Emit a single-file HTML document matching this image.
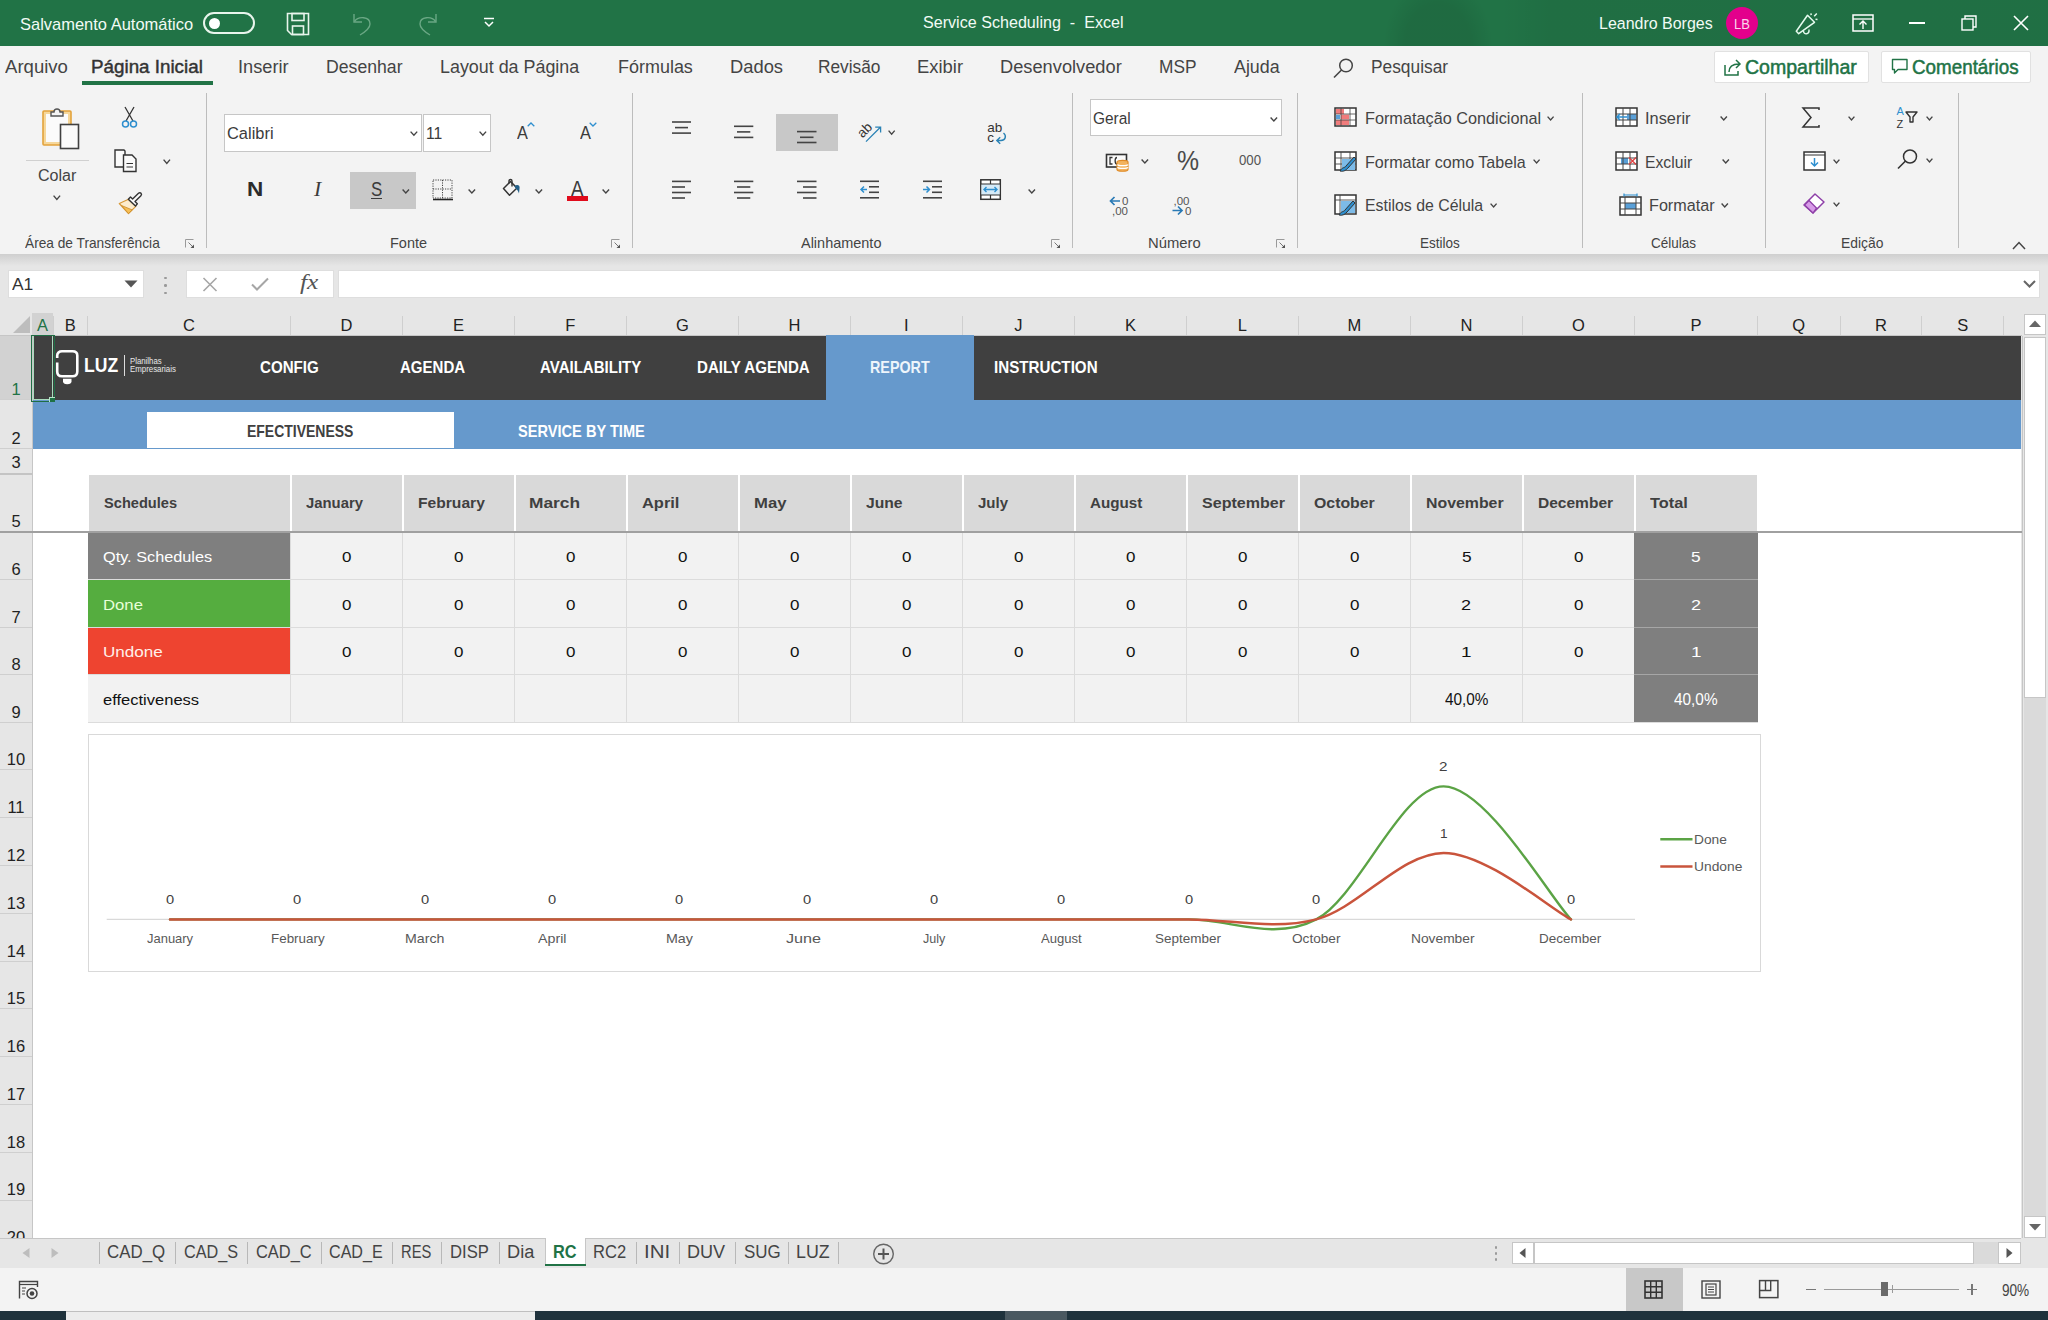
<!DOCTYPE html>
<html><head><meta charset="utf-8"><title>Service Scheduling - Excel</title>
<style>
*{margin:0;padding:0;box-sizing:border-box}
html,body{width:2048px;height:1320px;overflow:hidden;background:#fff;font-family:"Liberation Sans",sans-serif;color:#444;position:relative}
.a{position:absolute}
.t{position:absolute;white-space:pre;transform-origin:0 0}
svg{overflow:visible}
</style></head><body>
<div class="a" style="left:0px;top:0px;width:2048px;height:46px;z-index:0;background:#217346"></div>
<div class="a" style="left:0px;top:46px;width:2048px;height:208px;z-index:0;background:#f3f3f3"></div>
<div class="a" style="left:0px;top:254px;width:2048px;height:12px;z-index:0;background:linear-gradient(#cfcfcf,#e6e6e6)"></div>
<div class="a" style="left:0px;top:266px;width:2048px;height:47px;z-index:0;background:#e6e6e6"></div>
<div class="a" style="left:0px;top:313px;width:2048px;height:22px;z-index:0;background:#e6e6e6"></div>
<div class="a" style="left:0px;top:335px;width:2048px;height:903px;z-index:0;background:#ffffff"></div>
<div class="a" style="left:0px;top:1238px;width:2048px;height:30px;z-index:0;background:#e6e6e6;border-top:1px solid #c6c6c6"></div>
<div class="a" style="left:0px;top:1268px;width:2048px;height:43px;z-index:0;background:#f3f3f3"></div>
<div class="a" style="left:0px;top:1311px;width:2048px;height:9px;z-index:0;background:#1f323c"></div>
<div class="a" style="left:1380px;top:0px;width:668px;height:46px;z-index:1;background:radial-gradient(ellipse 55px 70px at 58px 46px, rgba(0,0,0,0.075), rgba(0,0,0,0.075) 60%, rgba(0,0,0,0) 100%), linear-gradient(90deg, rgba(0,0,0,0) 0, rgba(0,0,0,0) 120px, rgba(0,0,0,0.045) 170px, rgba(0,0,0,0.03) 100%)"></div>
<div class="a" style="left:203px;top:12px;width:52px;height:22px;z-index:3;border:2px solid #e8f5ec;border-radius:11px"></div>
<div class="a" style="left:208.5px;top:17.5px;width:11.0px;height:11.0px;z-index:4;background:#fff;border-radius:50%"></div>
<svg class="a" style="left:286px;top:12px;z-index:6" width="24" height="24" viewBox="0 0 24 24"><path d="M1.5 1.5 H22.5 V22.5 H5.5 L1.5 18.5 Z" fill="none" stroke="#e8f5ec" stroke-width="1.6"/><rect x="6" y="1.5" width="12" height="7" fill="none" stroke="#e8f5ec" stroke-width="1.6"/><rect x="6.5" y="14" width="11" height="8.5" fill="none" stroke="#e8f5ec" stroke-width="1.6"/></svg>
<svg class="a" style="left:352px;top:12px;z-index:6" width="22" height="24" viewBox="0 0 22 24"><path d="M2 2 V10 H10" fill="none" stroke="#6aa784" stroke-width="1.4"/><path d="M2.5 9.5 C6 4 18 4 18 12 C18 16 13 20 8 23" fill="none" stroke="#6aa784" stroke-width="1.4"/></svg>
<svg class="a" style="left:416px;top:12px;z-index:6" width="22" height="24" viewBox="0 0 22 24"><path d="M20 2 V10 H12" fill="none" stroke="#6aa784" stroke-width="1.4"/><path d="M19.5 9.5 C16 4 4 4 4 12 C4 16 9 20 14 23" fill="none" stroke="#6aa784" stroke-width="1.4"/></svg>
<svg class="a" style="left:483px;top:17px;z-index:6" width="12" height="11" viewBox="0 0 12 11"><path d="M1 1.5 H11" stroke="#fff" stroke-width="1.5"/><path d="M2 5 L6 9 L10 5" fill="none" stroke="#fff" stroke-width="1.5"/></svg>
<div class="a" style="left:1726px;top:7px;width:32px;height:32px;z-index:3;background:#e3008c;border-radius:50%"></div>
<svg class="a" style="left:1794px;top:10px;z-index:6" width="26" height="26" viewBox="0 0 26 26"><path d="M13.5 5.3 L20.5 12.3 L4.7 23.7 L2.3 21.3 Z" fill="none" stroke="#e6fbee" stroke-width="1.5" stroke-linejoin="round"/><path d="M9.5 21 C9.5 25 15.5 25 15 19.5" fill="none" stroke="#e6fbee" stroke-width="1.4"/><path d="M16.9 3.4 L17.2 5.2 M20.2 6.2 L22.8 3.5 M21.5 9.3 L23.5 9.5" stroke="#e6fbee" stroke-width="1.5"/></svg>
<svg class="a" style="left:1852px;top:14px;z-index:6" width="22" height="18" viewBox="0 0 22 18"><rect x="1" y="1" width="20" height="16" fill="none" stroke="#fff" stroke-width="1.5"/><path d="M1 5 H21" stroke="#fff" stroke-width="1.3"/><path d="M11 15 V7 M7.5 10.5 L11 7 L14.5 10.5" fill="none" stroke="#fff" stroke-width="1.4"/></svg>
<div class="a" style="left:1909px;top:22px;width:16px;height:2px;z-index:3;background:#fff"></div>
<svg class="a" style="left:1961px;top:15px;z-index:6" width="16" height="16" viewBox="0 0 16 16"><rect x="1" y="4" width="11" height="11" fill="none" stroke="#fff" stroke-width="1.4"/><path d="M4 4 V1 H15 V12 H12" fill="none" stroke="#fff" stroke-width="1.4"/></svg>
<svg class="a" style="left:2013px;top:15px;z-index:6" width="16" height="16" viewBox="0 0 16 16"><path d="M1 1 L15 15 M15 1 L1 15" stroke="#fff" stroke-width="1.6"/></svg>
<div class="a" style="left:82px;top:81px;width:131px;height:4px;z-index:3;background:#217346"></div>
<svg class="a" style="left:1333px;top:58px;z-index:6" width="21" height="21" viewBox="0 0 21 21"><circle cx="13" cy="7.5" r="6.3" fill="none" stroke="#444" stroke-width="1.5"/><path d="M8.5 12 L1 19.5" stroke="#444" stroke-width="1.6"/></svg>
<div class="a" style="left:1714px;top:51px;width:155px;height:32px;z-index:2;background:#fff;border:1px solid #e1e1e1;border-radius:2px"></div>
<div class="a" style="left:1881px;top:51px;width:150px;height:32px;z-index:2;background:#fff;border:1px solid #e1e1e1;border-radius:2px"></div>
<svg class="a" style="left:1723px;top:57px;z-index:6" width="20" height="20" viewBox="0 0 20 20"><path d="M2 8 V18 H15 V14" fill="none" stroke="#217346" stroke-width="1.5"/><path d="M6 15 C6 9 10 7 16 7 M13 3 L17 7 L13 11" fill="none" stroke="#217346" stroke-width="1.5"/></svg>
<svg class="a" style="left:1891px;top:58px;z-index:6" width="18" height="18" viewBox="0 0 18 18"><path d="M1.5 1.5 H16 V11.5 H7 L3.5 15 V11.5 H1.5 Z" fill="none" stroke="#217346" stroke-width="1.4" stroke-linejoin="round"/></svg>
<div class="a" style="left:206.1px;top:93px;width:1.1999999999999886px;height:155px;z-index:2;background:#bcbcbc"></div>
<div class="a" style="left:632.1999999999999px;top:93px;width:1.2000000000000455px;height:155px;z-index:2;background:#bcbcbc"></div>
<div class="a" style="left:1071.8000000000002px;top:93px;width:1.199999999999818px;height:155px;z-index:2;background:#bcbcbc"></div>
<div class="a" style="left:1296.8000000000002px;top:93px;width:1.199999999999818px;height:155px;z-index:2;background:#bcbcbc"></div>
<div class="a" style="left:1581.8000000000002px;top:93px;width:1.199999999999818px;height:155px;z-index:2;background:#bcbcbc"></div>
<div class="a" style="left:1765.1000000000001px;top:93px;width:1.199999999999818px;height:155px;z-index:2;background:#bcbcbc"></div>
<div class="a" style="left:1957.6000000000001px;top:93px;width:1.199999999999818px;height:155px;z-index:2;background:#bcbcbc"></div>
<svg class="a" style="left:42px;top:107px;z-index:6" width="38" height="43" viewBox="0 0 38 43">
<rect x="1" y="4" width="28" height="34" rx="1" fill="#f6d79a" stroke="#e3a33b" stroke-width="1.6"/>
<rect x="4" y="7" width="22" height="28" fill="#fbfbfb"/>
<path d="M9 9 V5 H12 C12 1 18 1 18 5 H21 V9 Z" fill="#f4f4f4" stroke="#555" stroke-width="1.4"/>
<rect x="18.5" y="17.5" width="18" height="24" fill="#fafafa" stroke="#404040" stroke-width="1.6"/></svg>
<div class="a" style="left:26px;top:160px;width:63px;height:1px;z-index:2;background:#d0d0d0"></div>
<svg class="a" style="left:52.8px;top:194.5px;z-index:6" width="7.7" height="5" viewBox="0 0 7.7 5"><path d="M0.6 0.6 L3.85 4.4 L7.1000000000000005 0.6" fill="none" stroke="#444" stroke-width="1.4"/></svg>
<svg class="a" style="left:121px;top:106px;z-index:6" width="17" height="23" viewBox="0 0 17 23"><path d="M4 1 L12 15 M13 1 L5 15" stroke="#333" stroke-width="1.3"/><circle cx="4.5" cy="18" r="3" fill="none" stroke="#2e8fcf" stroke-width="1.5"/><circle cx="12.5" cy="18" r="3" fill="none" stroke="#2e8fcf" stroke-width="1.5"/></svg>
<svg class="a" style="left:114px;top:149px;z-index:6" width="23" height="24" viewBox="0 0 23 24"><path d="M1 1 H10 L11 2 V18 H1 Z" fill="#fafafa" stroke="#333" stroke-width="1.4"/><path d="M9.5 6 H18 L22 10 V22.5 H9.5 Z" fill="#fafafa" stroke="#333" stroke-width="1.4"/><path d="M12.5 14.5 H19 M12.5 18 H19" stroke="#333" stroke-width="1.2"/></svg>
<svg class="a" style="left:163px;top:159px;z-index:6" width="7.6" height="5" viewBox="0 0 7.6 5"><path d="M0.6 0.6 L3.8 4.4 L7.0 0.6" fill="none" stroke="#444" stroke-width="1.4"/></svg>
<svg class="a" style="left:118px;top:192px;z-index:6" width="25" height="24" viewBox="0 0 25 24"><path d="M1.3 11.5 L10.5 7.2 L17.8 14.4 L10.5 21.5 Z" fill="#fdeccd" stroke="#d99a3a" stroke-width="1.2" stroke-linejoin="round"/><path d="M3.5 13.5 L14.2 17.9 L10.5 21.5 Z" fill="#f7bf55" stroke="#c98a2a" stroke-width="0.8"/><path d="M10.3 7.3 L12.5 5 L14.6 7 L20.5 1.3 C21.3 0.6 22.4 0.6 23 1.3 C23.6 2 23.6 3 22.9 3.7 L17 9.4 L19.3 11.8 L17.5 14.1 Z" fill="#fafafa" stroke="#333" stroke-width="1.4" stroke-linejoin="round"/></svg>
<svg class="a" style="left:185px;top:239px;z-index:6" width="10" height="9" viewBox="0 0 10 9"><path d="M0.5 8.5 V0.5 H8.5" fill="none" stroke="#9a9a9a" stroke-width="1"/><path d="M3.5 3.5 L8.5 8.5" stroke="#666" stroke-width="0.9"/><path d="M5.5 9 H9 V5.5 Z" fill="#555"/></svg>
<div class="a" style="left:224px;top:113.5px;width:197.5px;height:38.0px;z-index:2;background:#fff;border:1px solid #c6c6c6"></div>
<div class="a" style="left:423px;top:113.5px;width:68px;height:38.0px;z-index:2;background:#fff;border:1px solid #c6c6c6"></div>
<svg class="a" style="left:409.6px;top:131px;z-index:6" width="7.8" height="4.8" viewBox="0 0 7.8 4.8"><path d="M0.6 0.6 L3.9 4.2 L7.2 0.6" fill="none" stroke="#444" stroke-width="1.4"/></svg>
<svg class="a" style="left:478.6px;top:131px;z-index:6" width="7.7" height="4.8" viewBox="0 0 7.7 4.8"><path d="M0.6 0.6 L3.85 4.2 L7.1000000000000005 0.6" fill="none" stroke="#444" stroke-width="1.4"/></svg>
<svg class="a" style="left:527px;top:122px;z-index:6" width="8" height="5" viewBox="0 0 8 5"><path d="M0.7 4.3 L4 1 L7.3 4.3" fill="none" stroke="#2e8fcf" stroke-width="1.3"/></svg>
<svg class="a" style="left:589px;top:122px;z-index:6" width="8" height="5" viewBox="0 0 8 5"><path d="M0.7 0.7 L4 4 L7.3 0.7" fill="none" stroke="#2e8fcf" stroke-width="1.3"/></svg>
<div class="a" style="left:349.7px;top:171.8px;width:66.10000000000002px;height:37.29999999999998px;z-index:1;background:#c8c8c8"></div>
<div class="a" style="left:371px;top:197.5px;width:11px;height:1.5px;z-index:3;background:#3b3b3b"></div>
<svg class="a" style="left:402px;top:188.5px;z-index:6" width="7.6" height="4.6" viewBox="0 0 7.6 4.6"><path d="M0.6 0.6 L3.8 3.9999999999999996 L7.0 0.6" fill="none" stroke="#444" stroke-width="1.4"/></svg>
<svg class="a" style="left:432px;top:179px;z-index:6" width="22" height="22" viewBox="0 0 22 22"><rect x="1" y="1" width="19" height="18" fill="none" stroke="#444" stroke-width="1" stroke-dasharray="1.2 1.2"/><path d="M10.5 1 V19 M1 10 H20" stroke="#444" stroke-width="1" stroke-dasharray="1.2 1.2"/><path d="M1 20.5 H21" stroke="#222" stroke-width="1.6"/></svg>
<svg class="a" style="left:468.3px;top:188.5px;z-index:6" width="7.7" height="4.6" viewBox="0 0 7.7 4.6"><path d="M0.6 0.6 L3.85 3.9999999999999996 L7.1000000000000005 0.6" fill="none" stroke="#444" stroke-width="1.4"/></svg>
<svg class="a" style="left:502px;top:178px;z-index:6" width="20" height="19" viewBox="0 0 20 19"><path d="M1.5 10.5 L8.5 3.5 L15 10 L7.5 17.3 Z" fill="none" stroke="#333" stroke-width="1.5" stroke-linejoin="round"/><path d="M7 5.5 V3 C7 1 10 1 10 3 V8.5" fill="none" stroke="#333" stroke-width="1.4"/><path d="M12.5 8.5 C14.5 5.8 18 6.8 17.6 9.8 L17 15.5 C16.3 13.5 15.5 12 14 10.8 Z" fill="#215f88"/></svg>
<svg class="a" style="left:535.3px;top:188.5px;z-index:6" width="7.7" height="4.6" viewBox="0 0 7.7 4.6"><path d="M0.6 0.6 L3.85 3.9999999999999996 L7.1000000000000005 0.6" fill="none" stroke="#444" stroke-width="1.4"/></svg>
<div class="a" style="left:566.6px;top:195.9px;width:21.399999999999977px;height:5.5px;z-index:3;background:#e00b1c"></div>
<svg class="a" style="left:602px;top:188.5px;z-index:6" width="7.7" height="4.6" viewBox="0 0 7.7 4.6"><path d="M0.6 0.6 L3.85 3.9999999999999996 L7.1000000000000005 0.6" fill="none" stroke="#444" stroke-width="1.4"/></svg>
<svg class="a" style="left:611.3px;top:239px;z-index:6" width="10" height="9" viewBox="0 0 10 9"><path d="M0.5 8.5 V0.5 H8.5" fill="none" stroke="#9a9a9a" stroke-width="1"/><path d="M3.5 3.5 L8.5 8.5" stroke="#666" stroke-width="0.9"/><path d="M5.5 9 H9 V5.5 Z" fill="#555"/></svg>
<svg class="a" style="left:672px;top:120px;z-index:6" width="20" height="16" viewBox="0 0 20 16"><rect x="0" y="1.2" width="19" height="1.6" fill="#444"/><rect x="3" y="6.8" width="13" height="1.6" fill="#444"/><rect x="0" y="12.3" width="19" height="1.6" fill="#444"/></svg>
<svg class="a" style="left:734.4px;top:125px;z-index:6" width="20" height="16" viewBox="0 0 20 16"><rect x="0" y="0.5" width="19.3" height="1.6" fill="#444"/><rect x="3" y="6.1" width="13.3" height="1.6" fill="#444"/><rect x="0" y="11.6" width="19.3" height="1.6" fill="#444"/></svg>
<div class="a" style="left:775.5px;top:113.6px;width:62.5px;height:37.80000000000001px;z-index:1;background:#c8c8c8"></div>
<svg class="a" style="left:797px;top:130px;z-index:6" width="20" height="16" viewBox="0 0 20 16"><rect x="0" y="0.8" width="19.5" height="1.6" fill="#444"/><rect x="3" y="6.5" width="13.5" height="1.6" fill="#444"/><rect x="0" y="11.7" width="19.5" height="1.6" fill="#444"/></svg>
<svg class="a" style="left:672px;top:180px;z-index:6" width="20" height="20" viewBox="0 0 20 20"><rect x="0" y="0.6" width="19" height="1.6" fill="#444"/><rect x="0" y="6.2" width="13" height="1.6" fill="#444"/><rect x="0" y="11.7" width="19" height="1.6" fill="#444"/><rect x="0" y="17.2" width="13" height="1.6" fill="#444"/></svg>
<svg class="a" style="left:734.4px;top:180px;z-index:6" width="20" height="20" viewBox="0 0 20 20"><rect x="0" y="0.6" width="19.3" height="1.6" fill="#444"/><rect x="3" y="6.2" width="13.3" height="1.6" fill="#444"/><rect x="0" y="11.7" width="19.3" height="1.6" fill="#444"/><rect x="3" y="17.2" width="13.3" height="1.6" fill="#444"/></svg>
<svg class="a" style="left:797px;top:180px;z-index:6" width="20" height="20" viewBox="0 0 20 20"><rect x="0" y="0.6" width="19.5" height="1.6" fill="#444"/><rect x="6" y="6.2" width="13.5" height="1.6" fill="#444"/><rect x="0" y="11.7" width="19.5" height="1.6" fill="#444"/><rect x="6" y="17.2" width="13.5" height="1.6" fill="#444"/></svg>
<svg class="a" style="left:856px;top:119px;z-index:6" width="28" height="26" viewBox="0 0 28 26"><text x="0" y="0" font-family="Liberation Sans" font-size="13.5" fill="#333" transform="translate(6.5 19.5) rotate(-45)">ab</text><path d="M10 22.6 L24.6 8 M19.2 8.2 H24.6 V13.6" fill="none" stroke="#2a82b5" stroke-width="1.3"/></svg>
<svg class="a" style="left:888px;top:130px;z-index:6" width="7.3" height="4.7" viewBox="0 0 7.3 4.7"><path d="M0.6 0.6 L3.65 4.1000000000000005 L6.7 0.6" fill="none" stroke="#444" stroke-width="1.4"/></svg>
<svg class="a" style="left:986px;top:119px;z-index:6" width="24" height="26" viewBox="0 0 24 26"><text x="1.2" y="12.6" font-family="Liberation Sans" font-size="13.5" fill="#333">ab</text><text x="1.2" y="22.6" font-family="Liberation Sans" font-size="13.5" fill="#333">c</text><path d="M17.5 14 C20.5 16.5 20 21 15 21.5 H11 M14.2 18.2 L10.8 21.5 L14.2 24.8" fill="none" stroke="#2a82b5" stroke-width="1.4"/></svg>
<svg class="a" style="left:860px;top:180px;z-index:6" width="20" height="20" viewBox="0 0 20 20"><rect x="0" y="0.5" width="19" height="1.6" fill="#444"/><rect x="9" y="6" width="10" height="1.6" fill="#444"/><rect x="9" y="11.5" width="10" height="1.6" fill="#444"/><rect x="0" y="17" width="19" height="1.6" fill="#444"/><path d="M7 9.5 H1 M4 6.5 L1 9.5 L4 12.5" fill="none" stroke="#2e8fcf" stroke-width="1.5"/></svg>
<svg class="a" style="left:922.8px;top:180px;z-index:6" width="20" height="20" viewBox="0 0 20 20"><rect x="0" y="0.5" width="19" height="1.6" fill="#444"/><rect x="9" y="6" width="10" height="1.6" fill="#444"/><rect x="9" y="11.5" width="10" height="1.6" fill="#444"/><rect x="0" y="17" width="19" height="1.6" fill="#444"/><path d="M0 9.5 H6.5 M3.5 6.5 L6.5 9.5 L3.5 12.5" fill="none" stroke="#2e8fcf" stroke-width="1.5"/></svg>
<svg class="a" style="left:980px;top:179px;z-index:6" width="22" height="22" viewBox="0 0 22 22"><rect x="0.8" y="0.8" width="19.5" height="19.5" fill="#fff" stroke="#333" stroke-width="1.5"/><rect x="1.5" y="5" width="18" height="11" fill="#d6ebf8"/><path d="M1 5 H20 M1 16 H20 M10.5 1 V5 M10.5 16 V20" stroke="#333" stroke-width="1.2"/><path d="M4 10.5 H17 M6.5 8 L4 10.5 L6.5 13 M14.5 8 L17 10.5 L14.5 13" fill="none" stroke="#2e8fcf" stroke-width="1.4"/></svg>
<svg class="a" style="left:1028.4px;top:188.5px;z-index:6" width="7.6" height="4.6" viewBox="0 0 7.6 4.6"><path d="M0.6 0.6 L3.8 3.9999999999999996 L7.0 0.6" fill="none" stroke="#444" stroke-width="1.4"/></svg>
<svg class="a" style="left:1051px;top:239px;z-index:6" width="10" height="9" viewBox="0 0 10 9"><path d="M0.5 8.5 V0.5 H8.5" fill="none" stroke="#9a9a9a" stroke-width="1"/><path d="M3.5 3.5 L8.5 8.5" stroke="#666" stroke-width="0.9"/><path d="M5.5 9 H9 V5.5 Z" fill="#555"/></svg>
<div class="a" style="left:1090px;top:98.8px;width:192px;height:36.89999999999999px;z-index:2;background:#fff;border:1px solid #c6c6c6"></div>
<svg class="a" style="left:1269.5px;top:117px;z-index:6" width="7.7" height="4.6" viewBox="0 0 7.7 4.6"><path d="M0.6 0.6 L3.85 3.9999999999999996 L7.1000000000000005 0.6" fill="none" stroke="#444" stroke-width="1.4"/></svg>
<svg class="a" style="left:1105px;top:153px;z-index:6" width="24" height="20" viewBox="0 0 24 20"><rect x="1.5" y="1.5" width="20" height="12.5" fill="#fafafa" stroke="#333" stroke-width="1.6"/><path d="M7.5 4.5 H5 V11 H7.5 M12 4.5 C9.5 4.5 9.5 11 12 11" fill="none" stroke="#333" stroke-width="1.3"/><path d="M12 9 C12 6.8 23 6.8 23 9 V16.5 C23 18.8 12 18.8 12 16.5 Z" fill="#f3b35e" stroke="#e08a25" stroke-width="1.2"/><path d="M12.5 11.5 C13 13 22.5 13 23 11.5 M12.5 14.2 C13 15.7 22.5 15.7 23 14.2" fill="none" stroke="#fff" stroke-width="1.2"/></svg>
<svg class="a" style="left:1141.3px;top:159px;z-index:6" width="7.7" height="4.6" viewBox="0 0 7.7 4.6"><path d="M0.6 0.6 L3.85 3.9999999999999996 L7.1000000000000005 0.6" fill="none" stroke="#444" stroke-width="1.4"/></svg>
<svg class="a" style="left:1109px;top:194px;z-index:6" width="23" height="22" viewBox="0 0 23 22"><path d="M11 7 H1.5 M5.5 3 L1.5 7 L5.5 11" fill="none" stroke="#2a7ab5" stroke-width="1.7"/><text x="13" y="11.2" font-family="Liberation Sans" font-size="11.5" fill="#555">0</text><text x="3" y="20.5" font-family="Liberation Sans" font-size="11.5" fill="#555">,00</text></svg>
<svg class="a" style="left:1172px;top:194px;z-index:6" width="23" height="22" viewBox="0 0 23 22"><text x="1.5" y="11.2" font-family="Liberation Sans" font-size="11.5" fill="#555">,00</text><path d="M0.5 16.5 H10 M6 12.5 L10 16.5 L6 20.5" fill="none" stroke="#2a7ab5" stroke-width="1.7"/><text x="13" y="20.5" font-family="Liberation Sans" font-size="11.5" fill="#555">0</text></svg>
<svg class="a" style="left:1276px;top:239px;z-index:6" width="10" height="9" viewBox="0 0 10 9"><path d="M0.5 8.5 V0.5 H8.5" fill="none" stroke="#9a9a9a" stroke-width="1"/><path d="M3.5 3.5 L8.5 8.5" stroke="#666" stroke-width="0.9"/><path d="M5.5 9 H9 V5.5 Z" fill="#555"/></svg>
<svg class="a" style="left:1334px;top:107px;z-index:6" width="24" height="21" viewBox="0 0 24 21"><rect x="1" y="1" width="21" height="18" fill="#fff" stroke="#333" stroke-width="1.5"/><rect x="2" y="2" width="8" height="5" fill="#f07c7c"/><rect x="7" y="7.5" width="8" height="5" fill="#f07c7c"/><rect x="2" y="13" width="13" height="5" fill="#f07c7c"/><rect x="2" y="8" width="4" height="4" fill="#5aa0d8"/><path d="M1 7 H22 M1 13 H22 M7 1 V19 M16 1 V19" stroke="#444" stroke-width="0.8"/></svg>
<svg class="a" style="left:1547px;top:116px;z-index:6" width="7.2" height="4.5" viewBox="0 0 7.2 4.5"><path d="M0.6 0.6 L3.6 3.9 L6.6000000000000005 0.6" fill="none" stroke="#444" stroke-width="1.4"/></svg>
<svg class="a" style="left:1334px;top:151px;z-index:6" width="24" height="21" viewBox="0 0 24 21"><rect x="1" y="1" width="21" height="18" fill="#fff" stroke="#333" stroke-width="1.5"/><path d="M1 7 H22 M1 13 H22 M7 1 V19 M16 1 V19" stroke="#444" stroke-width="0.9"/><path d="M8 8 H21 V19 H8 Z" fill="#7dbbe8"/><path d="M6 20 C8 16 11 17 12 15 L20 6 L22 8 L14 17 C12 19 10 21 6 20 Z" fill="#2e8fcf" stroke="#333" stroke-width="1"/></svg>
<svg class="a" style="left:1532.6px;top:159px;z-index:6" width="7.2" height="4.5" viewBox="0 0 7.2 4.5"><path d="M0.6 0.6 L3.6 3.9 L6.6000000000000005 0.6" fill="none" stroke="#444" stroke-width="1.4"/></svg>
<svg class="a" style="left:1334px;top:194px;z-index:6" width="24" height="22" viewBox="0 0 24 22"><rect x="1" y="1" width="21" height="19" fill="#fff" stroke="#333" stroke-width="1.5"/><path d="M1 6 H22 M6 1 V20" stroke="#444" stroke-width="0.9"/><path d="M7 7 H21 V19 H7 Z" fill="#7dbbe8"/><path d="M5 21 C7 17 10 18 11 16 L19 7 L21 9 L13 18 C11 20 9 22 5 21 Z" fill="#2e8fcf" stroke="#333" stroke-width="1"/></svg>
<svg class="a" style="left:1489.8px;top:203px;z-index:6" width="7.2" height="4.5" viewBox="0 0 7.2 4.5"><path d="M0.6 0.6 L3.6 3.9 L6.6000000000000005 0.6" fill="none" stroke="#444" stroke-width="1.4"/></svg>
<svg class="a" style="left:1615px;top:107px;z-index:6" width="24" height="21" viewBox="0 0 24 21"><rect x="1" y="1" width="21" height="18" fill="#fff" stroke="#333" stroke-width="1.5"/><rect x="12" y="7" width="9" height="6" fill="#5aa0d8"/><path d="M1 7 H22 M1 13 H22 M8 1 V19 M15 1 V19" stroke="#444" stroke-width="1"/><path d="M12 10 H2 M5 7 L2 10 L5 13" fill="none" stroke="#2e8fcf" stroke-width="1.6"/></svg>
<svg class="a" style="left:1720px;top:116px;z-index:6" width="7.5" height="4.5" viewBox="0 0 7.5 4.5"><path d="M0.6 0.6 L3.75 3.9 L6.9 0.6" fill="none" stroke="#444" stroke-width="1.4"/></svg>
<svg class="a" style="left:1615px;top:151px;z-index:6" width="24" height="21" viewBox="0 0 24 21"><rect x="1" y="1" width="21" height="18" fill="#fff" stroke="#333" stroke-width="1.5"/><rect x="6" y="7" width="7" height="6" fill="#5aa0d8"/><path d="M1 7 H22 M1 13 H22 M8 1 V19 M15 1 V19" stroke="#444" stroke-width="1"/><path d="M14 6.5 L21 13.5 M21 6.5 L14 13.5" stroke="#e04040" stroke-width="1.3"/></svg>
<svg class="a" style="left:1722px;top:159px;z-index:6" width="7.5" height="4.5" viewBox="0 0 7.5 4.5"><path d="M0.6 0.6 L3.75 3.9 L6.9 0.6" fill="none" stroke="#444" stroke-width="1.4"/></svg>
<svg class="a" style="left:1619px;top:193px;z-index:6" width="24" height="23" viewBox="0 0 24 23"><rect x="1" y="4" width="21" height="18" fill="#fff" stroke="#333" stroke-width="1.5"/><rect x="6" y="10" width="11" height="6" fill="#5aa0d8"/><path d="M1 10 H22 M1 16 H22 M6 4 V22 M17 4 V22" stroke="#444" stroke-width="1"/><path d="M5 2 H18 M5 0.5 V3.5 M18 0.5 V3.5" stroke="#2e8fcf" stroke-width="1.2"/></svg>
<svg class="a" style="left:1721.3px;top:203px;z-index:6" width="7.5" height="4.5" viewBox="0 0 7.5 4.5"><path d="M0.6 0.6 L3.75 3.9 L6.9 0.6" fill="none" stroke="#444" stroke-width="1.4"/></svg>
<svg class="a" style="left:1801px;top:107px;z-index:6" width="20" height="21" viewBox="0 0 20 21"><path d="M18 3 V1 H2 L10 10.5 L2 20 H18 V18" fill="none" stroke="#333" stroke-width="1.5"/></svg>
<svg class="a" style="left:1847.8px;top:116px;z-index:6" width="7" height="4.5" viewBox="0 0 7 4.5"><path d="M0.6 0.6 L3.5 3.9 L6.4 0.6" fill="none" stroke="#444" stroke-width="1.4"/></svg>
<svg class="a" style="left:1896px;top:105px;z-index:6" width="24" height="25" viewBox="0 0 24 25"><text x="0.5" y="10" font-family="Liberation Sans" font-size="11" fill="#2e8fcf">A</text><text x="0.5" y="22.5" font-family="Liberation Sans" font-size="11" fill="#333">Z</text><path d="M10 7 H21 L17 12 V17 H14 V12 Z" fill="none" stroke="#333" stroke-width="1.4" stroke-linejoin="round"/></svg>
<svg class="a" style="left:1926px;top:116px;z-index:6" width="7" height="4.5" viewBox="0 0 7 4.5"><path d="M0.6 0.6 L3.5 3.9 L6.4 0.6" fill="none" stroke="#444" stroke-width="1.4"/></svg>
<svg class="a" style="left:1803px;top:151px;z-index:6" width="23" height="21" viewBox="0 0 23 21"><rect x="1" y="1" width="21" height="18" fill="#fff" stroke="#333" stroke-width="1.5"/><path d="M1 4 H22" stroke="#333" stroke-width="1"/><path d="M11.5 7 V15 M8 11.5 L11.5 15 L15 11.5" fill="none" stroke="#2e8fcf" stroke-width="1.5"/></svg>
<svg class="a" style="left:1833px;top:159px;z-index:6" width="7" height="4.5" viewBox="0 0 7 4.5"><path d="M0.6 0.6 L3.5 3.9 L6.4 0.6" fill="none" stroke="#444" stroke-width="1.4"/></svg>
<svg class="a" style="left:1897px;top:149px;z-index:6" width="22" height="21" viewBox="0 0 22 21"><circle cx="13" cy="7.5" r="6.5" fill="none" stroke="#333" stroke-width="1.5"/><path d="M8.5 12 L1 19.5" stroke="#333" stroke-width="1.6"/></svg>
<svg class="a" style="left:1926px;top:157.5px;z-index:6" width="7" height="4.5" viewBox="0 0 7 4.5"><path d="M0.6 0.6 L3.5 3.9 L6.4 0.6" fill="none" stroke="#444" stroke-width="1.4"/></svg>
<svg class="a" style="left:1803px;top:192px;z-index:6" width="22" height="22" viewBox="0 0 22 22"><path d="M1 13 L12 2 L21 10 L10 21 Z" fill="#fff" stroke="#8e3fa8" stroke-width="1.5" stroke-linejoin="round"/><path d="M1.5 13 L6 8.5 L13.5 16 L10 21 Z" fill="#d79be8" stroke="#8e3fa8" stroke-width="1.3"/></svg>
<svg class="a" style="left:1833px;top:202px;z-index:6" width="7" height="4.5" viewBox="0 0 7 4.5"><path d="M0.6 0.6 L3.5 3.9 L6.4 0.6" fill="none" stroke="#444" stroke-width="1.4"/></svg>
<svg class="a" style="left:2012px;top:241px;z-index:6" width="14" height="9" viewBox="0 0 14 9"><path d="M1 8 L7 1.5 L13 8" fill="none" stroke="#444" stroke-width="1.5"/></svg>
<div class="a" style="left:8px;top:270px;width:136px;height:28px;z-index:2;background:#fff;border:1px solid #dedede"></div>
<svg class="a" style="left:124px;top:280px;z-index:6" width="14" height="8" viewBox="0 0 14 8"><path d="M0.5 0.5 H13.5 L7 7.5 Z" fill="#555"/></svg>
<div class="a" style="left:164px;top:276.5px;width:2.5px;height:2.5px;z-index:2;background:#9a9a9a;border-radius:50%"></div>
<div class="a" style="left:164px;top:284px;width:2.5px;height:2.5px;z-index:2;background:#9a9a9a;border-radius:50%"></div>
<div class="a" style="left:164px;top:291.5px;width:2.5px;height:2.5px;z-index:2;background:#9a9a9a;border-radius:50%"></div>
<div class="a" style="left:186px;top:270px;width:148px;height:28px;z-index:2;background:#fff;border:1px solid #dedede"></div>
<svg class="a" style="left:202px;top:277px;z-index:6" width="16" height="15" viewBox="0 0 16 15"><path d="M1.5 1 L14.5 14 M14.5 1 L1.5 14" stroke="#a6a6a6" stroke-width="1.6"/></svg>
<svg class="a" style="left:251px;top:277px;z-index:6" width="18" height="14" viewBox="0 0 18 14"><path d="M1 7.5 L6 12.5 L17 1.5" fill="none" stroke="#a6a6a6" stroke-width="2"/></svg>
<div class="a" style="left:338px;top:270px;width:1702px;height:28px;z-index:2;background:#fff;border:1px solid #dedede"></div>
<svg class="a" style="left:2023px;top:280px;z-index:6" width="13" height="8" viewBox="0 0 13 8"><path d="M1 1 L6.5 6.5 L12 1" fill="none" stroke="#666" stroke-width="2"/></svg>
<svg class="a" style="left:13px;top:316px;z-index:6" width="18" height="17" viewBox="0 0 18 17"><path d="M17 0 V17 H0 Z" fill="#bdbdbd"/></svg>
<div class="a" style="left:32px;top:313px;width:21px;height:22px;z-index:1;background:#d2d2d2"></div>
<div class="a" style="left:52.5px;top:316px;width:1.0px;height:19px;z-index:2;background:#cfcfcf"></div>
<div class="a" style="left:32px;top:313px;width:21px;height:22px;z-index:4;text-align:center;font-size:16.5px;line-height:24px;color:#217346">A</div>
<div class="a" style="left:87.0px;top:316px;width:1.0px;height:19px;z-index:2;background:#cfcfcf"></div>
<div class="a" style="left:53px;top:313px;width:34.5px;height:22px;z-index:4;text-align:center;font-size:16.5px;line-height:24px;color:#222">B</div>
<div class="a" style="left:289.9px;top:316px;width:1.0px;height:19px;z-index:2;background:#cfcfcf"></div>
<div class="a" style="left:87.5px;top:313px;width:202.89999999999998px;height:22px;z-index:4;text-align:center;font-size:16.5px;line-height:24px;color:#222">C</div>
<div class="a" style="left:401.9px;top:316px;width:1.0px;height:19px;z-index:2;background:#cfcfcf"></div>
<div class="a" style="left:290.4px;top:313px;width:112.0px;height:22px;z-index:4;text-align:center;font-size:16.5px;line-height:24px;color:#222">D</div>
<div class="a" style="left:513.9px;top:316px;width:1.0px;height:19px;z-index:2;background:#cfcfcf"></div>
<div class="a" style="left:402.4px;top:313px;width:112.0px;height:22px;z-index:4;text-align:center;font-size:16.5px;line-height:24px;color:#222">E</div>
<div class="a" style="left:625.9px;top:316px;width:1.0px;height:19px;z-index:2;background:#cfcfcf"></div>
<div class="a" style="left:514.4px;top:313px;width:112.0px;height:22px;z-index:4;text-align:center;font-size:16.5px;line-height:24px;color:#222">F</div>
<div class="a" style="left:737.9px;top:316px;width:1.0px;height:19px;z-index:2;background:#cfcfcf"></div>
<div class="a" style="left:626.4px;top:313px;width:112.0px;height:22px;z-index:4;text-align:center;font-size:16.5px;line-height:24px;color:#222">G</div>
<div class="a" style="left:849.9px;top:316px;width:1.0px;height:19px;z-index:2;background:#cfcfcf"></div>
<div class="a" style="left:738.4px;top:313px;width:112.0px;height:22px;z-index:4;text-align:center;font-size:16.5px;line-height:24px;color:#222">H</div>
<div class="a" style="left:961.9px;top:316px;width:1.0px;height:19px;z-index:2;background:#cfcfcf"></div>
<div class="a" style="left:850.4px;top:313px;width:112.0px;height:22px;z-index:4;text-align:center;font-size:16.5px;line-height:24px;color:#222">I</div>
<div class="a" style="left:1073.9px;top:316px;width:1.0px;height:19px;z-index:2;background:#cfcfcf"></div>
<div class="a" style="left:962.4px;top:313px;width:112.00000000000011px;height:22px;z-index:4;text-align:center;font-size:16.5px;line-height:24px;color:#222">J</div>
<div class="a" style="left:1185.9px;top:316px;width:1.0px;height:19px;z-index:2;background:#cfcfcf"></div>
<div class="a" style="left:1074.4px;top:313px;width:112.0px;height:22px;z-index:4;text-align:center;font-size:16.5px;line-height:24px;color:#222">K</div>
<div class="a" style="left:1297.9px;top:316px;width:1.0px;height:19px;z-index:2;background:#cfcfcf"></div>
<div class="a" style="left:1186.4px;top:313px;width:112.0px;height:22px;z-index:4;text-align:center;font-size:16.5px;line-height:24px;color:#222">L</div>
<div class="a" style="left:1409.9px;top:316px;width:1.0px;height:19px;z-index:2;background:#cfcfcf"></div>
<div class="a" style="left:1298.4px;top:313px;width:112.0px;height:22px;z-index:4;text-align:center;font-size:16.5px;line-height:24px;color:#222">M</div>
<div class="a" style="left:1521.9px;top:316px;width:1.0px;height:19px;z-index:2;background:#cfcfcf"></div>
<div class="a" style="left:1410.4px;top:313px;width:112.0px;height:22px;z-index:4;text-align:center;font-size:16.5px;line-height:24px;color:#222">N</div>
<div class="a" style="left:1633.9px;top:316px;width:1.0px;height:19px;z-index:2;background:#cfcfcf"></div>
<div class="a" style="left:1522.4px;top:313px;width:112.0px;height:22px;z-index:4;text-align:center;font-size:16.5px;line-height:24px;color:#222">O</div>
<div class="a" style="left:1757.1px;top:316px;width:1.0px;height:19px;z-index:2;background:#cfcfcf"></div>
<div class="a" style="left:1634.4px;top:313px;width:123.19999999999982px;height:22px;z-index:4;text-align:center;font-size:16.5px;line-height:24px;color:#222">P</div>
<div class="a" style="left:1839.5px;top:316px;width:1.0px;height:19px;z-index:2;background:#cfcfcf"></div>
<div class="a" style="left:1757.6px;top:313px;width:82.40000000000009px;height:22px;z-index:4;text-align:center;font-size:16.5px;line-height:24px;color:#222">Q</div>
<div class="a" style="left:1921.3px;top:316px;width:1.0px;height:19px;z-index:2;background:#cfcfcf"></div>
<div class="a" style="left:1840px;top:313px;width:81.79999999999995px;height:22px;z-index:4;text-align:center;font-size:16.5px;line-height:24px;color:#222">R</div>
<div class="a" style="left:2003.0px;top:316px;width:1.0px;height:19px;z-index:2;background:#cfcfcf"></div>
<div class="a" style="left:1921.8px;top:313px;width:81.70000000000005px;height:22px;z-index:4;text-align:center;font-size:16.5px;line-height:24px;color:#222">S</div>
<div class="a" style="left:0px;top:334.5px;width:2022px;height:1.0px;z-index:2;background:#c6c6c6"></div>
<div class="a" style="left:2021px;top:313px;width:27px;height:925px;z-index:1;background:#e6e6e6"></div>
<div class="a" style="left:2021.5px;top:336px;width:1.0px;height:902px;z-index:2;background:#c6c6c6"></div>
<div class="a" style="left:2024px;top:314px;width:22px;height:21px;z-index:2;background:#fff;border:1px solid #c6c6c6"></div>
<svg class="a" style="left:2029px;top:320px;z-index:6" width="12" height="7" viewBox="0 0 12 7"><path d="M0 7 L6 0.5 L12 7 Z" fill="#666"/></svg>
<div class="a" style="left:2024px;top:336.5px;width:22px;height:361.0px;z-index:2;background:#fff;border:1px solid #c6c6c6"></div>
<div class="a" style="left:2024px;top:697.5px;width:22px;height:518.5px;z-index:2;background:#dadada"></div>
<div class="a" style="left:2024px;top:1216px;width:22px;height:22px;z-index:2;background:#fff;border:1px solid #c6c6c6"></div>
<svg class="a" style="left:2029px;top:1224px;z-index:6" width="12" height="7" viewBox="0 0 12 7"><path d="M0 0 L6 6.5 L12 0 Z" fill="#666"/></svg>
<div class="a" style="left:0px;top:335px;width:32px;height:903px;z-index:1;background:#e6e6e6"></div>
<div class="a" style="left:32px;top:335px;width:1px;height:903px;z-index:2;background:#c6c6c6"></div>
<div class="a" style="left:0px;top:335px;width:32px;height:64.5px;z-index:1;background:#d2d2d2"></div>
<div class="a" style="left:0px;top:399.0px;width:32px;height:1.0px;z-index:2;background:#cfcfcf"></div>
<div class="a" style="left:0;top:376.9px;width:32px;height:22px;z-index:4;text-align:center;font-size:16.5px;line-height:24px;color:#217346">1</div>
<div class="a" style="left:0px;top:448.0px;width:32px;height:1.0px;z-index:2;background:#cfcfcf"></div>
<div class="a" style="left:0;top:425.9px;width:32px;height:22px;z-index:4;text-align:center;font-size:16.5px;line-height:24px;color:#222">2</div>
<div class="a" style="left:0px;top:472.5px;width:32px;height:1.0px;z-index:2;background:#cfcfcf"></div>
<div class="a" style="left:0;top:450.4px;width:32px;height:22px;z-index:4;text-align:center;font-size:16.5px;line-height:24px;color:#222">3</div>
<div class="a" style="left:0px;top:531.0px;width:32px;height:1.0px;z-index:2;background:#cfcfcf"></div>
<div class="a" style="left:0;top:508.9px;width:32px;height:22px;z-index:4;text-align:center;font-size:16.5px;line-height:24px;color:#222">5</div>
<div class="a" style="left:0px;top:578.9px;width:32px;height:1.0px;z-index:2;background:#cfcfcf"></div>
<div class="a" style="left:0;top:556.8px;width:32px;height:22px;z-index:4;text-align:center;font-size:16.5px;line-height:24px;color:#222">6</div>
<div class="a" style="left:0px;top:626.7px;width:32px;height:1.0px;z-index:2;background:#cfcfcf"></div>
<div class="a" style="left:0;top:604.6px;width:32px;height:22px;z-index:4;text-align:center;font-size:16.5px;line-height:24px;color:#222">7</div>
<div class="a" style="left:0px;top:674.3px;width:32px;height:1.0px;z-index:2;background:#cfcfcf"></div>
<div class="a" style="left:0;top:652.2px;width:32px;height:22px;z-index:4;text-align:center;font-size:16.5px;line-height:24px;color:#222">8</div>
<div class="a" style="left:0px;top:721.7px;width:32px;height:1.0px;z-index:2;background:#cfcfcf"></div>
<div class="a" style="left:0;top:699.6px;width:32px;height:22px;z-index:4;text-align:center;font-size:16.5px;line-height:24px;color:#222">9</div>
<div class="a" style="left:0px;top:769.48px;width:32px;height:1.0px;z-index:2;background:#cfcfcf"></div>
<div class="a" style="left:0;top:747.4px;width:32px;height:22px;z-index:4;text-align:center;font-size:16.5px;line-height:24px;color:#222">10</div>
<div class="a" style="left:0px;top:817.26px;width:32px;height:1.0px;z-index:2;background:#cfcfcf"></div>
<div class="a" style="left:0;top:795.2px;width:32px;height:22px;z-index:4;text-align:center;font-size:16.5px;line-height:24px;color:#222">11</div>
<div class="a" style="left:0px;top:865.04px;width:32px;height:1.0px;z-index:2;background:#cfcfcf"></div>
<div class="a" style="left:0;top:842.9px;width:32px;height:22px;z-index:4;text-align:center;font-size:16.5px;line-height:24px;color:#222">12</div>
<div class="a" style="left:0px;top:912.8199999999999px;width:32px;height:1.0px;z-index:2;background:#cfcfcf"></div>
<div class="a" style="left:0;top:890.7px;width:32px;height:22px;z-index:4;text-align:center;font-size:16.5px;line-height:24px;color:#222">13</div>
<div class="a" style="left:0px;top:960.5999999999999px;width:32px;height:1.0px;z-index:2;background:#cfcfcf"></div>
<div class="a" style="left:0;top:938.5px;width:32px;height:22px;z-index:4;text-align:center;font-size:16.5px;line-height:24px;color:#222">14</div>
<div class="a" style="left:0px;top:1008.3799999999999px;width:32px;height:1.0px;z-index:2;background:#cfcfcf"></div>
<div class="a" style="left:0;top:986.3px;width:32px;height:22px;z-index:4;text-align:center;font-size:16.5px;line-height:24px;color:#222">15</div>
<div class="a" style="left:0px;top:1056.1599999999999px;width:32px;height:1.0px;z-index:2;background:#cfcfcf"></div>
<div class="a" style="left:0;top:1034.1px;width:32px;height:22px;z-index:4;text-align:center;font-size:16.5px;line-height:24px;color:#222">16</div>
<div class="a" style="left:0px;top:1103.9399999999998px;width:32px;height:1.0px;z-index:2;background:#cfcfcf"></div>
<div class="a" style="left:0;top:1081.8px;width:32px;height:22px;z-index:4;text-align:center;font-size:16.5px;line-height:24px;color:#222">17</div>
<div class="a" style="left:0px;top:1151.7199999999998px;width:32px;height:1.0px;z-index:2;background:#cfcfcf"></div>
<div class="a" style="left:0;top:1129.6px;width:32px;height:22px;z-index:4;text-align:center;font-size:16.5px;line-height:24px;color:#222">18</div>
<div class="a" style="left:0px;top:1199.4999999999998px;width:32px;height:1.0px;z-index:2;background:#cfcfcf"></div>
<div class="a" style="left:0;top:1177.4px;width:32px;height:22px;z-index:4;text-align:center;font-size:16.5px;line-height:24px;color:#222">19</div>
<div class="a" style="left:0px;top:1247.2799999999997px;width:32px;height:1.0px;z-index:2;background:#cfcfcf"></div>
<div class="a" style="left:0;top:1225.2px;width:32px;height:22px;z-index:4;text-align:center;font-size:16.5px;line-height:24px;color:#222">20</div>
<div class="a" style="left:0px;top:473px;width:32px;height:1.5px;z-index:2;background:#e6e6e6;border-top:1px solid #c4c4c4;border-bottom:1px solid #c4c4c4"></div>
<div class="a" style="left:0px;top:531px;width:2022px;height:1.5px;z-index:8;background:#a0a0a0"></div>
<div class="a" style="left:33px;top:335px;width:1988px;height:64.5px;z-index:1;background:#404040"></div>
<div class="a" style="left:825.9px;top:335px;width:148.10000000000002px;height:64.5px;z-index:2;background:#6699cc"></div>
<div class="a" style="left:33px;top:399.5px;width:1988px;height:49.0px;z-index:1;background:#6699cc"></div>
<div class="a" style="left:147px;top:411.7px;width:307px;height:36.80000000000001px;z-index:2;background:#ffffff"></div>
<div class="a" style="left:31px;top:335px;width:23.5px;height:66.5px;z-index:9;border:1.6px solid #1f6e45"></div>
<div class="a" style="left:32.6px;top:336px;width:20.299999999999997px;height:63.89999999999998px;z-index:9;border:1px solid #a8dcbc;border-top:none"></div>
<div class="a" style="left:48.5px;top:396.5px;width:6.5px;height:5.5px;z-index:10;background:#1f7145;border-top:1px solid #b5e3c5;border-left:1px solid #b5e3c5"></div>
<svg class="a" style="left:54px;top:349px;z-index:6" width="28" height="38" viewBox="0 0 28 38"><path d="M3.2 9 V6.5 C3.2 4 5 2.3 8 2.3 H18.5 C21.5 2.3 23.3 4 23.3 6.5 V22.5 C23.3 25.5 21.5 27.3 18.5 27.3 H8 C5 27.3 3.2 25.5 3.2 22.5 V13.5" fill="none" stroke="#fff" stroke-width="2.6"/><path d="M9 29.8 H17.5 V32.5 C17.5 34 16 35.2 13.2 35.2 C10.5 35.2 9 34 9 32.5 Z" fill="#fff"/></svg>
<div class="a" style="left:124.1px;top:355px;width:1.0px;height:21px;z-index:3;background:#ddd"></div>
<div class="a" style="left:88.5px;top:475px;width:201.0px;height:56px;z-index:2;background:#d9d9d9"></div>
<div class="a" style="left:291.9px;top:475px;width:110.0px;height:56px;z-index:2;background:#d9d9d9"></div>
<div class="a" style="left:403.9px;top:475px;width:110.0px;height:56px;z-index:2;background:#d9d9d9"></div>
<div class="a" style="left:515.9px;top:475px;width:110.0px;height:56px;z-index:2;background:#d9d9d9"></div>
<div class="a" style="left:627.9px;top:475px;width:110.0px;height:56px;z-index:2;background:#d9d9d9"></div>
<div class="a" style="left:739.9px;top:475px;width:110.0px;height:56px;z-index:2;background:#d9d9d9"></div>
<div class="a" style="left:851.9px;top:475px;width:110.0px;height:56px;z-index:2;background:#d9d9d9"></div>
<div class="a" style="left:963.9px;top:475px;width:110.00000000000011px;height:56px;z-index:2;background:#d9d9d9"></div>
<div class="a" style="left:1075.9px;top:475px;width:110.0px;height:56px;z-index:2;background:#d9d9d9"></div>
<div class="a" style="left:1187.9px;top:475px;width:110.0px;height:56px;z-index:2;background:#d9d9d9"></div>
<div class="a" style="left:1299.9px;top:475px;width:110.0px;height:56px;z-index:2;background:#d9d9d9"></div>
<div class="a" style="left:1411.9px;top:475px;width:110.0px;height:56px;z-index:2;background:#d9d9d9"></div>
<div class="a" style="left:1523.9px;top:475px;width:110.0px;height:56px;z-index:2;background:#d9d9d9"></div>
<div class="a" style="left:1635.9px;top:475px;width:121.19999999999982px;height:56px;z-index:2;background:#d9d9d9"></div>
<div class="a" style="left:290.4px;top:532.5px;width:1344.0px;height:189.70000000000005px;z-index:1;background:#f2f2f2"></div>
<div class="a" style="left:88px;top:532.5px;width:202.39999999999998px;height:189.70000000000005px;z-index:1;background:#f2f2f2"></div>
<div class="a" style="left:401.9px;top:532.5px;width:1.0px;height:189.70000000000005px;z-index:2;background:#dcdcdc"></div>
<div class="a" style="left:513.9px;top:532.5px;width:1.0px;height:189.70000000000005px;z-index:2;background:#dcdcdc"></div>
<div class="a" style="left:625.9px;top:532.5px;width:1.0px;height:189.70000000000005px;z-index:2;background:#dcdcdc"></div>
<div class="a" style="left:737.9px;top:532.5px;width:1.0px;height:189.70000000000005px;z-index:2;background:#dcdcdc"></div>
<div class="a" style="left:849.9px;top:532.5px;width:1.0px;height:189.70000000000005px;z-index:2;background:#dcdcdc"></div>
<div class="a" style="left:961.9px;top:532.5px;width:1.0px;height:189.70000000000005px;z-index:2;background:#dcdcdc"></div>
<div class="a" style="left:1073.9px;top:532.5px;width:1.0px;height:189.70000000000005px;z-index:2;background:#dcdcdc"></div>
<div class="a" style="left:1185.9px;top:532.5px;width:1.0px;height:189.70000000000005px;z-index:2;background:#dcdcdc"></div>
<div class="a" style="left:1297.9px;top:532.5px;width:1.0px;height:189.70000000000005px;z-index:2;background:#dcdcdc"></div>
<div class="a" style="left:1409.9px;top:532.5px;width:1.0px;height:189.70000000000005px;z-index:2;background:#dcdcdc"></div>
<div class="a" style="left:1521.9px;top:532.5px;width:1.0px;height:189.70000000000005px;z-index:2;background:#dcdcdc"></div>
<div class="a" style="left:1633.9px;top:532.5px;width:1.0px;height:189.70000000000005px;z-index:2;background:#dcdcdc"></div>
<div class="a" style="left:289.9px;top:532.5px;width:1.0px;height:189.70000000000005px;z-index:2;background:#dcdcdc"></div>
<div class="a" style="left:88px;top:578.9px;width:1669.6px;height:1.0px;z-index:2;background:#dcdcdc"></div>
<div class="a" style="left:88px;top:626.7px;width:1669.6px;height:1.0px;z-index:2;background:#dcdcdc"></div>
<div class="a" style="left:88px;top:674.3px;width:1669.6px;height:1.0px;z-index:2;background:#dcdcdc"></div>
<div class="a" style="left:88px;top:721.7px;width:1669.6px;height:1.0px;z-index:2;background:#dcdcdc"></div>
<div class="a" style="left:88px;top:532.5px;width:202.39999999999998px;height:46.39999999999998px;z-index:2;background:#7f7f7f"></div>
<div class="a" style="left:88px;top:579.9px;width:202.39999999999998px;height:46.80000000000007px;z-index:2;background:#55ad3f"></div>
<div class="a" style="left:88px;top:627.7px;width:202.39999999999998px;height:46.59999999999991px;z-index:2;background:#ee4430"></div>
<div class="a" style="left:88px;top:675.3px;width:202.39999999999998px;height:46.40000000000009px;z-index:2;background:#f2f2f2"></div>
<div class="a" style="left:1634.4px;top:532.5px;width:123.19999999999982px;height:189.70000000000005px;z-index:2;background:#7f7f7f"></div>
<div class="a" style="left:1634.4px;top:578.6999999999999px;width:123.19999999999982px;height:1.400000000000091px;z-index:3;background:#a6a6a6"></div>
<div class="a" style="left:1634.4px;top:626.5px;width:123.19999999999982px;height:1.400000000000091px;z-index:3;background:#a6a6a6"></div>
<div class="a" style="left:1634.4px;top:674.0999999999999px;width:123.19999999999982px;height:1.400000000000091px;z-index:3;background:#a6a6a6"></div>
<div class="a" style="left:88px;top:734px;width:1672.5px;height:237.5px;z-index:2;background:#fff;border:1px solid #d9d9d9"></div>
<svg class="a" style="left:0;top:0;z-index:4" width="2048" height="1320" viewBox="0 0 2048 1320"><path d="M106.7 919.4 H1635" stroke="#d9d9d9" stroke-width="1.2"/><path d="M170.00 919.40 C191.23 919.40 254.91 919.40 297.36 919.40 C339.81 919.40 382.27 919.40 424.72 919.40 C467.17 919.40 509.63 919.40 552.08 919.40 C594.53 919.40 636.99 919.40 679.44 919.40 C721.89 919.40 764.35 919.40 806.80 919.40 C849.25 919.40 891.71 919.40 934.16 919.40 C976.61 919.40 1019.07 919.40 1061.52 919.40 C1103.97 919.40 1146.43 919.40 1188.88 919.40 C1231.33 919.40 1273.79 941.57 1316.24 919.40 C1358.69 897.23 1401.15 786.40 1443.60 786.40 C1486.05 786.40 1549.73 897.23 1570.96 919.40" fill="none" stroke="#5ba345" stroke-width="2.4" stroke-linecap="round"/><path d="M170.00 919.40 C191.23 919.40 254.91 919.40 297.36 919.40 C339.81 919.40 382.27 919.40 424.72 919.40 C467.17 919.40 509.63 919.40 552.08 919.40 C594.53 919.40 636.99 919.40 679.44 919.40 C721.89 919.40 764.35 919.40 806.80 919.40 C849.25 919.40 891.71 919.40 934.16 919.40 C976.61 919.40 1019.07 919.40 1061.52 919.40 C1103.97 919.40 1146.43 919.40 1188.88 919.40 C1231.33 919.40 1273.79 930.48 1316.24 919.40 C1358.69 908.32 1401.15 852.90 1443.60 852.90 C1486.05 852.90 1549.73 908.32 1570.96 919.40" fill="none" stroke="#c9543c" stroke-width="2.5" stroke-linecap="round"/><path d="M1660.3 839.2 H1692.5" stroke="#5ba345" stroke-width="2.5"/><path d="M1660.3 866.6 H1692.5" stroke="#c9543c" stroke-width="2.5"/></svg>
<div class="a" style="left:0px;top:1238px;width:1490px;height:30px;z-index:20;background:#e6e6e6"></div>
<div class="a" style="left:0px;top:1237.5px;width:2021px;height:1.0px;z-index:21;background:#c6c6c6"></div>
<svg class="a" style="left:22px;top:1248px;z-index:22" width="8" height="10" viewBox="0 0 8 10"><path d="M7.5 0 V10 L0.5 5 Z" fill="#bdbdbd"/></svg>
<svg class="a" style="left:51px;top:1248px;z-index:22" width="8" height="10" viewBox="0 0 8 10"><path d="M0.5 0 V10 L7.5 5 Z" fill="#bdbdbd"/></svg>
<div class="a" style="left:98.8px;top:1241.5px;width:1.0px;height:22.5px;z-index:22;background:#b8b8b8"></div>
<div class="a" style="left:174.8px;top:1241.5px;width:1.0px;height:22.5px;z-index:22;background:#b8b8b8"></div>
<div class="a" style="left:246.9px;top:1241.5px;width:1.0px;height:22.5px;z-index:22;background:#b8b8b8"></div>
<div class="a" style="left:320.7px;top:1241.5px;width:1.0px;height:22.5px;z-index:22;background:#b8b8b8"></div>
<div class="a" style="left:392.2px;top:1241.5px;width:1.0px;height:22.5px;z-index:22;background:#b8b8b8"></div>
<div class="a" style="left:441.0px;top:1241.5px;width:1.0px;height:22.5px;z-index:22;background:#b8b8b8"></div>
<div class="a" style="left:498.8px;top:1241.5px;width:1.0px;height:22.5px;z-index:22;background:#b8b8b8"></div>
<div class="a" style="left:636.1px;top:1241.5px;width:1.0px;height:22.5px;z-index:22;background:#b8b8b8"></div>
<div class="a" style="left:679.0px;top:1241.5px;width:1.0px;height:22.5px;z-index:22;background:#b8b8b8"></div>
<div class="a" style="left:735.2px;top:1241.5px;width:1.0px;height:22.5px;z-index:22;background:#b8b8b8"></div>
<div class="a" style="left:788.0px;top:1241.5px;width:1.0px;height:22.5px;z-index:22;background:#b8b8b8"></div>
<div class="a" style="left:838.0px;top:1241.5px;width:1.0px;height:22.5px;z-index:22;background:#b8b8b8"></div>
<div class="a" style="left:545.2px;top:1238px;width:40.39999999999998px;height:28px;z-index:21;background:#ffffff"></div>
<div class="a" style="left:545.2px;top:1238px;width:1.0px;height:28px;z-index:22;background:#c6c6c6"></div>
<div class="a" style="left:584.6px;top:1238px;width:1.0px;height:28px;z-index:22;background:#c6c6c6"></div>
<div class="a" style="left:545.2px;top:1263.5px;width:40.39999999999998px;height:2.0px;z-index:22;background:#217346"></div>
<svg class="a" style="left:872px;top:1243px;z-index:23" width="23" height="22" viewBox="0 0 23 22"><circle cx="11.5" cy="11" r="9.8" fill="none" stroke="#666" stroke-width="1.4"/><path d="M11.5 5.5 V16.5 M6 11 H17" stroke="#555" stroke-width="2"/></svg>
<div class="a" style="left:1490px;top:1238px;width:558px;height:30px;z-index:20;background:#e6e6e6"></div>
<div class="a" style="left:1494.8px;top:1246px;width:2.5px;height:2.5px;z-index:22;background:#9a9a9a;border-radius:50%"></div>
<div class="a" style="left:1494.8px;top:1252px;width:2.5px;height:2.5px;z-index:22;background:#9a9a9a;border-radius:50%"></div>
<div class="a" style="left:1494.8px;top:1258px;width:2.5px;height:2.5px;z-index:22;background:#9a9a9a;border-radius:50%"></div>
<div class="a" style="left:1512px;top:1242px;width:22px;height:21.5px;z-index:22;background:#fff;border:1px solid #c6c6c6"></div>
<svg class="a" style="left:1519px;top:1248px;z-index:23" width="7" height="10" viewBox="0 0 7 10"><path d="M6.5 0 V10 L0.5 5 Z" fill="#555"/></svg>
<div class="a" style="left:1534px;top:1242px;width:440px;height:21.5px;z-index:22;background:#fff;border:1px solid #c6c6c6"></div>
<div class="a" style="left:1974px;top:1242px;width:24px;height:21.5px;z-index:22;background:#dadada"></div>
<div class="a" style="left:1998px;top:1242px;width:22.5px;height:21.5px;z-index:22;background:#fff;border:1px solid #c6c6c6"></div>
<svg class="a" style="left:2006px;top:1248px;z-index:23" width="7" height="10" viewBox="0 0 7 10"><path d="M0.5 0 V10 L6.5 5 Z" fill="#555"/></svg>
<div class="a" style="left:0px;top:1268px;width:2048px;height:43px;z-index:20;background:#f3f3f3"></div>
<svg class="a" style="left:18px;top:1280px;z-index:21" width="22" height="20" viewBox="0 0 22 20"><path d="M1.5 18.5 V1.5 H19.5 V7" fill="none" stroke="#444" stroke-width="1.4"/><path d="M1.5 4.5 H19.5" stroke="#444" stroke-width="1.2"/><path d="M4 8 H8 M4 11 H7 M4 14 H7" stroke="#444" stroke-width="1.1"/><circle cx="14" cy="13.5" r="5" fill="none" stroke="#444" stroke-width="1.5"/><circle cx="14" cy="13.5" r="2.3" fill="#444"/></svg>
<div class="a" style="left:1625.6px;top:1268px;width:57.40000000000009px;height:43px;z-index:21;background:#c8c8c8"></div>
<svg class="a" style="left:1644px;top:1280px;z-index:22" width="19" height="19" viewBox="0 0 19 19"><rect x="1" y="1" width="17" height="17" fill="none" stroke="#333" stroke-width="1.6"/><path d="M6.7 1 V18 M12.3 1 V18 M1 6.7 H18 M1 12.3 H18" stroke="#333" stroke-width="1.4"/></svg>
<svg class="a" style="left:1701px;top:1280px;z-index:22" width="20" height="19" viewBox="0 0 20 19"><rect x="1" y="1" width="18" height="17" fill="none" stroke="#444" stroke-width="1.4"/><rect x="5" y="4" width="10" height="11" fill="none" stroke="#444" stroke-width="1.2"/><path d="M7 7 H13 M7 9.5 H13 M7 12 H13" stroke="#444" stroke-width="1"/></svg>
<svg class="a" style="left:1758px;top:1279px;z-index:22" width="22" height="20" viewBox="0 0 22 20"><rect x="1.6" y="1.6" width="18.3" height="17" fill="none" stroke="#444" stroke-width="1.5"/><path d="M1.6 11.5 H12.7 V1.6 M7.5 1.6 V11.5" fill="none" stroke="#444" stroke-width="1.4"/></svg>
<div class="a" style="left:1805.8px;top:1288.5px;width:10.200000000000045px;height:1.5px;z-index:22;background:#777"></div>
<div class="a" style="left:1824px;top:1288.7px;width:135px;height:1.0px;z-index:22;background:#9a9a9a"></div>
<div class="a" style="left:1881.3px;top:1281.8px;width:6.900000000000091px;height:14.700000000000045px;z-index:23;background:#6a6a6a"></div>
<div class="a" style="left:1892px;top:1285px;width:1px;height:8px;z-index:22;background:#9a9a9a"></div>
<div class="a" style="left:1966.7px;top:1288.5px;width:10.299999999999955px;height:1.5px;z-index:22;background:#777"></div>
<div class="a" style="left:1971.1px;top:1283.5px;width:1.5px;height:11.5px;z-index:22;background:#777"></div>
<div class="a" style="left:0px;top:1311px;width:2048px;height:9px;z-index:20;background:#1f323c"></div>
<div class="a" style="left:66px;top:1311px;width:469px;height:9px;z-index:21;background:#ececec"></div>
<div class="a" style="left:66px;top:1311px;width:469px;height:1px;z-index:22;background:#bfbfbf"></div>
<div class="a" style="left:1005px;top:1311px;width:62px;height:9px;z-index:21;background:#4a5860"></div>
<div class="t" style="left:20.34px;top:17.00px;font-size:16.96px;line-height:16.96px;color:#f2fbf5;font-weight:normal;z-index:5;transform:scaleX(0.9731);">Salvamento Automático</div>
<div class="t" style="left:923.36px;top:15.00px;font-size:16.67px;line-height:16.67px;color:#f2fbf5;font-weight:normal;z-index:5;transform:scaleX(0.9670);">Service Scheduling  -  Excel</div>
<div class="t" style="left:1598.72px;top:15.00px;font-size:16.23px;line-height:16.23px;color:#f2fbf5;font-weight:normal;z-index:5;transform:scaleX(0.9848);">Leandro Borges</div>
<div class="t" style="left:1734.36px;top:17.00px;font-size:14.35px;line-height:14.35px;color:#fbd3ea;font-weight:normal;z-index:5;transform:scaleX(0.9029);">LB</div>
<div class="t" style="left:5.00px;top:58.00px;font-size:18.70px;line-height:18.70px;color:#444444;font-weight:normal;z-index:5;transform:scaleX(0.9934);">Arquivo</div>
<div class="t" style="left:91.20px;top:58.00px;font-size:18.70px;line-height:18.70px;color:#333;font-weight:normal;z-index:5;transform:scaleX(1.0060);-webkit-text-stroke:0.45px #333;">Página Inicial</div>
<div class="t" style="left:237.86px;top:58.00px;font-size:18.70px;line-height:18.70px;color:#444444;font-weight:normal;z-index:5;transform:scaleX(0.9737);">Inserir</div>
<div class="t" style="left:326.19px;top:58.00px;font-size:18.70px;line-height:18.70px;color:#444444;font-weight:normal;z-index:5;transform:scaleX(0.9442);">Desenhar</div>
<div class="t" style="left:440.37px;top:58.00px;font-size:18.70px;line-height:18.70px;color:#444444;font-weight:normal;z-index:5;transform:scaleX(0.9569);">Layout da Página</div>
<div class="t" style="left:618.36px;top:58.00px;font-size:18.70px;line-height:18.70px;color:#444444;font-weight:normal;z-index:5;transform:scaleX(0.9610);">Fórmulas</div>
<div class="t" style="left:729.83px;top:58.00px;font-size:18.70px;line-height:18.70px;color:#444444;font-weight:normal;z-index:5;transform:scaleX(0.9810);">Dados</div>
<div class="t" style="left:818.22px;top:58.00px;font-size:18.70px;line-height:18.70px;color:#444444;font-weight:normal;z-index:5;transform:scaleX(0.9255);">Revisão</div>
<div class="t" style="left:917.22px;top:58.00px;font-size:18.70px;line-height:18.70px;color:#444444;font-weight:normal;z-index:5;transform:scaleX(0.9865);">Exibir</div>
<div class="t" style="left:999.74px;top:58.00px;font-size:18.70px;line-height:18.70px;color:#444444;font-weight:normal;z-index:5;transform:scaleX(0.9767);">Desenvolvedor</div>
<div class="t" style="left:1158.72px;top:58.00px;font-size:18.70px;line-height:18.70px;color:#444444;font-weight:normal;z-index:5;transform:scaleX(0.9256);">MSP</div>
<div class="t" style="left:1234.30px;top:58.00px;font-size:18.70px;line-height:18.70px;color:#444444;font-weight:normal;z-index:5;transform:scaleX(0.9543);">Ajuda</div>
<div class="t" style="left:1370.71px;top:58.00px;font-size:18.70px;line-height:18.70px;color:#444444;font-weight:normal;z-index:5;transform:scaleX(0.9276);">Pesquisar</div>
<div class="t" style="left:1745.02px;top:58.00px;font-size:19.42px;line-height:19.42px;color:#217346;font-weight:normal;z-index:5;transform:scaleX(1.0069);-webkit-text-stroke:0.5px #217346;">Compartilhar</div>
<div class="t" style="left:1912.46px;top:58.00px;font-size:19.42px;line-height:19.42px;color:#217346;font-weight:normal;z-index:5;transform:scaleX(0.9692);-webkit-text-stroke:0.5px #217346;">Comentários</div>
<div class="t" style="left:37.80px;top:168.00px;font-size:15.80px;line-height:15.80px;color:#444444;font-weight:normal;z-index:5;transform:scaleX(1.0176);">Colar</div>
<div class="t" style="left:24.50px;top:236.00px;font-size:14.78px;line-height:14.78px;color:#444444;font-weight:normal;z-index:5;transform:scaleX(0.9275);">Área de Transferência</div>
<div class="t" style="left:226.98px;top:126.00px;font-size:15.94px;line-height:15.94px;color:#3b3b3b;font-weight:normal;z-index:5;transform:scaleX(1.0302);">Calibri</div>
<div class="t" style="left:426.40px;top:126.00px;font-size:15.94px;line-height:15.94px;color:#3b3b3b;font-weight:normal;z-index:5;transform:scaleX(0.9866);">11</div>
<div class="t" style="left:516.60px;top:125.00px;font-size:17.83px;line-height:17.83px;color:#3b3b3b;font-weight:normal;z-index:5;transform:scaleX(0.9126);">A</div>
<div class="t" style="left:579.70px;top:125.00px;font-size:17.83px;line-height:17.83px;color:#3b3b3b;font-weight:normal;z-index:5;transform:scaleX(0.9210);">A</div>
<div class="t" style="left:246.65px;top:179.00px;font-size:20.29px;line-height:20.29px;color:#2b2b2b;font-weight:bold;z-index:5;transform:scaleX(1.1089);">N</div>
<div class="t" style="left:314.22px;top:179.00px;font-size:20.29px;line-height:20.29px;color:#3b3b3b;font-weight:normal;z-index:5;transform:scaleX(1.0615);font-style:italic;font-family:'Liberation Serif',serif;">I</div>
<div class="t" style="left:370.82px;top:179.00px;font-size:20.29px;line-height:20.29px;color:#3b3b3b;font-weight:normal;z-index:5;transform:scaleX(0.8354);">S</div>
<div class="t" style="left:571.30px;top:179.00px;font-size:21.45px;line-height:21.45px;color:#3b3b3b;font-weight:normal;z-index:5;transform:scaleX(0.8698);">A</div>
<div class="t" style="left:390.44px;top:236.00px;font-size:14.78px;line-height:14.78px;color:#444444;font-weight:normal;z-index:5;transform:scaleX(0.9810);">Fonte</div>
<div class="t" style="left:801.00px;top:236.00px;font-size:14.78px;line-height:14.78px;color:#444444;font-weight:normal;z-index:5;transform:scaleX(0.9799);">Alinhamento</div>
<div class="t" style="left:1092.93px;top:110.00px;font-size:16.09px;line-height:16.09px;color:#3b3b3b;font-weight:normal;z-index:5;transform:scaleX(0.9592);">Geral</div>
<div class="t" style="left:1176.66px;top:147.00px;font-size:27.10px;line-height:27.10px;color:#4a4a4a;font-weight:normal;z-index:5;transform:scaleX(0.9158);">%</div>
<div class="t" style="left:1239.40px;top:153.00px;font-size:14.93px;line-height:14.93px;color:#555;font-weight:normal;z-index:5;transform:scaleX(0.8863);">000</div>
<div class="t" style="left:1147.81px;top:236.00px;font-size:14.78px;line-height:14.78px;color:#444444;font-weight:normal;z-index:5;transform:scaleX(1.0028);">Número</div>
<div class="t" style="left:1364.70px;top:110.00px;font-size:16.38px;line-height:16.38px;color:#444444;font-weight:normal;z-index:5;transform:scaleX(0.9933);">Formatação Condicional</div>
<div class="t" style="left:1364.71px;top:155.00px;font-size:16.96px;line-height:16.96px;color:#444444;font-weight:normal;z-index:5;transform:scaleX(0.9505);">Formatar como Tabela</div>
<div class="t" style="left:1364.73px;top:198.00px;font-size:16.52px;line-height:16.52px;color:#444444;font-weight:normal;z-index:5;transform:scaleX(0.9606);">Estilos de Célula</div>
<div class="t" style="left:1419.62px;top:236.00px;font-size:14.78px;line-height:14.78px;color:#444444;font-weight:normal;z-index:5;transform:scaleX(0.9138);">Estilos</div>
<div class="t" style="left:1645.13px;top:111.00px;font-size:15.80px;line-height:15.80px;color:#444444;font-weight:normal;z-index:5;transform:scaleX(1.0364);">Inserir</div>
<div class="t" style="left:1645.34px;top:155.00px;font-size:16.96px;line-height:16.96px;color:#444444;font-weight:normal;z-index:5;transform:scaleX(0.9290);">Excluir</div>
<div class="t" style="left:1649.21px;top:198.00px;font-size:15.94px;line-height:15.94px;color:#444444;font-weight:normal;z-index:5;transform:scaleX(1.0146);">Formatar</div>
<div class="t" style="left:1651.12px;top:236.00px;font-size:14.78px;line-height:14.78px;color:#444444;font-weight:normal;z-index:5;transform:scaleX(0.9144);">Células</div>
<div class="t" style="left:1840.79px;top:236.00px;font-size:14.78px;line-height:14.78px;color:#444444;font-weight:normal;z-index:5;transform:scaleX(0.9383);">Edição</div>
<div class="t" style="left:12.00px;top:276.00px;font-size:17.39px;line-height:17.39px;color:#333;font-weight:normal;z-index:5;transform:scaleX(1.0015);">A1</div>
<div class="t" style="left:299.75px;top:272.00px;font-size:21.00px;line-height:21.00px;color:#555;font-weight:normal;z-index:5;transform:scaleX(1.2109);font-style:italic;font-family:'Liberation Serif',serif;">fx</div>
<div class="t" style="left:259.89px;top:360.00px;font-size:15.65px;line-height:15.65px;color:#fff;font-weight:bold;z-index:5;transform:scaleX(0.9674);">CONFIG</div>
<div class="t" style="left:400.10px;top:360.00px;font-size:15.65px;line-height:15.65px;color:#fff;font-weight:bold;z-index:5;transform:scaleX(0.9618);">AGENDA</div>
<div class="t" style="left:539.70px;top:360.00px;font-size:15.65px;line-height:15.65px;color:#fff;font-weight:bold;z-index:5;transform:scaleX(0.9612);">AVAILABILITY</div>
<div class="t" style="left:696.69px;top:360.00px;font-size:15.65px;line-height:15.65px;color:#fff;font-weight:bold;z-index:5;transform:scaleX(0.9655);">DAILY AGENDA</div>
<div class="t" style="left:869.94px;top:360.00px;font-size:15.65px;line-height:15.65px;color:#eef5fb;font-weight:bold;z-index:5;transform:scaleX(0.9149);">REPORT</div>
<div class="t" style="left:994.49px;top:360.00px;font-size:15.65px;line-height:15.65px;color:#fff;font-weight:bold;z-index:5;transform:scaleX(0.9692);">INSTRUCTION</div>
<div class="t" style="left:246.96px;top:423.00px;font-size:16.38px;line-height:16.38px;color:#404040;font-weight:bold;z-index:5;transform:scaleX(0.8547);">EFECTIVENESS</div>
<div class="t" style="left:517.51px;top:423.00px;font-size:16.38px;line-height:16.38px;color:#fff;font-weight:bold;z-index:5;transform:scaleX(0.8924);">SERVICE BY TIME</div>
<div class="t" style="left:83.95px;top:356.00px;font-size:19.57px;line-height:19.57px;color:#fff;font-weight:bold;z-index:5;transform:scaleX(0.8971);">LUZ</div>
<div class="t" style="left:130.18px;top:357.00px;font-size:8.60px;line-height:8.60px;color:#e8e8e8;font-weight:normal;z-index:5;transform:scaleX(0.9071);">Planilhas</div>
<div class="t" style="left:130.17px;top:365.00px;font-size:8.60px;line-height:8.60px;color:#e8e8e8;font-weight:normal;z-index:5;transform:scaleX(0.9160);">Empresariais</div>
<div class="t" style="left:103.71px;top:495.00px;font-size:15.36px;line-height:15.36px;color:#404040;font-weight:bold;z-index:5;transform:scaleX(0.9516);">Schedules</div>
<div class="t" style="left:306.45px;top:495.00px;font-size:15.36px;line-height:15.36px;color:#404040;font-weight:bold;z-index:5;transform:scaleX(0.9672);">January</div>
<div class="t" style="left:417.56px;top:495.00px;font-size:15.36px;line-height:15.36px;color:#404040;font-weight:bold;z-index:5;transform:scaleX(1.0173);">February</div>
<div class="t" style="left:529.46px;top:495.00px;font-size:15.36px;line-height:15.36px;color:#404040;font-weight:bold;z-index:5;transform:scaleX(1.1293);">March</div>
<div class="t" style="left:642.17px;top:495.00px;font-size:15.36px;line-height:15.36px;color:#404040;font-weight:bold;z-index:5;transform:scaleX(1.0700);">April</div>
<div class="t" style="left:753.50px;top:495.00px;font-size:15.36px;line-height:15.36px;color:#404040;font-weight:bold;z-index:5;transform:scaleX(1.0854);">May</div>
<div class="t" style="left:866.34px;top:495.00px;font-size:15.36px;line-height:15.36px;color:#404040;font-weight:bold;z-index:5;transform:scaleX(1.0198);">June</div>
<div class="t" style="left:978.35px;top:495.00px;font-size:15.36px;line-height:15.36px;color:#404040;font-weight:bold;z-index:5;transform:scaleX(0.9789);">July</div>
<div class="t" style="left:1090.20px;top:495.00px;font-size:15.36px;line-height:15.36px;color:#404040;font-weight:bold;z-index:5;transform:scaleX(0.9895);">August</div>
<div class="t" style="left:1202.18px;top:495.00px;font-size:15.36px;line-height:15.36px;color:#404040;font-weight:bold;z-index:5;transform:scaleX(1.0449);">September</div>
<div class="t" style="left:1313.87px;top:495.00px;font-size:15.36px;line-height:15.36px;color:#404040;font-weight:bold;z-index:5;transform:scaleX(1.0319);">October</div>
<div class="t" style="left:1425.55px;top:495.00px;font-size:15.36px;line-height:15.36px;color:#404040;font-weight:bold;z-index:5;transform:scaleX(1.0328);">November</div>
<div class="t" style="left:1537.57px;top:495.00px;font-size:15.36px;line-height:15.36px;color:#404040;font-weight:bold;z-index:5;transform:scaleX(1.0105);">December</div>
<div class="t" style="left:1650.34px;top:495.00px;font-size:15.36px;line-height:15.36px;color:#404040;font-weight:bold;z-index:5;transform:scaleX(1.0623);">Total</div>
<div class="t" style="left:103.35px;top:549.00px;font-size:15.22px;line-height:15.22px;color:#ffffff;font-weight:normal;z-index:5;transform:scaleX(1.0693);">Qty. Schedules</div>
<div class="t" style="left:102.66px;top:597.00px;font-size:15.22px;line-height:15.22px;color:#e8ffd8;font-weight:normal;z-index:5;transform:scaleX(1.0979);">Done</div>
<div class="t" style="left:102.80px;top:644.00px;font-size:15.22px;line-height:15.22px;color:#fff0ea;font-weight:normal;z-index:5;transform:scaleX(1.1221);">Undone</div>
<div class="t" style="left:103.34px;top:692.00px;font-size:15.40px;line-height:15.40px;color:#111111;font-weight:normal;z-index:5;transform:scaleX(1.0731);">effectiveness</div>
<div class="t" style="left:341.74px;top:549.00px;font-size:15.22px;line-height:15.22px;color:#111;font-weight:normal;z-index:5;transform:scaleX(1.1131);">0</div>
<div class="t" style="left:453.74px;top:549.00px;font-size:15.22px;line-height:15.22px;color:#111;font-weight:normal;z-index:5;transform:scaleX(1.1131);">0</div>
<div class="t" style="left:565.74px;top:549.00px;font-size:15.22px;line-height:15.22px;color:#111;font-weight:normal;z-index:5;transform:scaleX(1.1131);">0</div>
<div class="t" style="left:677.74px;top:549.00px;font-size:15.22px;line-height:15.22px;color:#111;font-weight:normal;z-index:5;transform:scaleX(1.1131);">0</div>
<div class="t" style="left:789.74px;top:549.00px;font-size:15.22px;line-height:15.22px;color:#111;font-weight:normal;z-index:5;transform:scaleX(1.1131);">0</div>
<div class="t" style="left:901.74px;top:549.00px;font-size:15.22px;line-height:15.22px;color:#111;font-weight:normal;z-index:5;transform:scaleX(1.1131);">0</div>
<div class="t" style="left:1013.74px;top:549.00px;font-size:15.22px;line-height:15.22px;color:#111;font-weight:normal;z-index:5;transform:scaleX(1.1131);">0</div>
<div class="t" style="left:1125.74px;top:549.00px;font-size:15.22px;line-height:15.22px;color:#111;font-weight:normal;z-index:5;transform:scaleX(1.1131);">0</div>
<div class="t" style="left:1237.74px;top:549.00px;font-size:15.22px;line-height:15.22px;color:#111;font-weight:normal;z-index:5;transform:scaleX(1.1131);">0</div>
<div class="t" style="left:1349.74px;top:549.00px;font-size:15.22px;line-height:15.22px;color:#111;font-weight:normal;z-index:5;transform:scaleX(1.1131);">0</div>
<div class="t" style="left:1461.56px;top:549.00px;font-size:15.22px;line-height:15.22px;color:#111;font-weight:normal;z-index:5;transform:scaleX(1.1363);">5</div>
<div class="t" style="left:1573.74px;top:549.00px;font-size:15.22px;line-height:15.22px;color:#111;font-weight:normal;z-index:5;transform:scaleX(1.1131);">0</div>
<div class="t" style="left:341.74px;top:597.00px;font-size:15.22px;line-height:15.22px;color:#111;font-weight:normal;z-index:5;transform:scaleX(1.1131);">0</div>
<div class="t" style="left:453.74px;top:597.00px;font-size:15.22px;line-height:15.22px;color:#111;font-weight:normal;z-index:5;transform:scaleX(1.1131);">0</div>
<div class="t" style="left:565.74px;top:597.00px;font-size:15.22px;line-height:15.22px;color:#111;font-weight:normal;z-index:5;transform:scaleX(1.1131);">0</div>
<div class="t" style="left:677.74px;top:597.00px;font-size:15.22px;line-height:15.22px;color:#111;font-weight:normal;z-index:5;transform:scaleX(1.1131);">0</div>
<div class="t" style="left:789.74px;top:597.00px;font-size:15.22px;line-height:15.22px;color:#111;font-weight:normal;z-index:5;transform:scaleX(1.1131);">0</div>
<div class="t" style="left:901.74px;top:597.00px;font-size:15.22px;line-height:15.22px;color:#111;font-weight:normal;z-index:5;transform:scaleX(1.1131);">0</div>
<div class="t" style="left:1013.74px;top:597.00px;font-size:15.22px;line-height:15.22px;color:#111;font-weight:normal;z-index:5;transform:scaleX(1.1131);">0</div>
<div class="t" style="left:1125.74px;top:597.00px;font-size:15.22px;line-height:15.22px;color:#111;font-weight:normal;z-index:5;transform:scaleX(1.1131);">0</div>
<div class="t" style="left:1237.74px;top:597.00px;font-size:15.22px;line-height:15.22px;color:#111;font-weight:normal;z-index:5;transform:scaleX(1.1131);">0</div>
<div class="t" style="left:1349.74px;top:597.00px;font-size:15.22px;line-height:15.22px;color:#111;font-weight:normal;z-index:5;transform:scaleX(1.1131);">0</div>
<div class="t" style="left:1461.35px;top:597.00px;font-size:15.22px;line-height:15.22px;color:#111;font-weight:normal;z-index:5;transform:scaleX(1.1857);">2</div>
<div class="t" style="left:1573.74px;top:597.00px;font-size:15.22px;line-height:15.22px;color:#111;font-weight:normal;z-index:5;transform:scaleX(1.1131);">0</div>
<div class="t" style="left:341.74px;top:644.00px;font-size:15.22px;line-height:15.22px;color:#111;font-weight:normal;z-index:5;transform:scaleX(1.1131);">0</div>
<div class="t" style="left:453.74px;top:644.00px;font-size:15.22px;line-height:15.22px;color:#111;font-weight:normal;z-index:5;transform:scaleX(1.1131);">0</div>
<div class="t" style="left:565.74px;top:644.00px;font-size:15.22px;line-height:15.22px;color:#111;font-weight:normal;z-index:5;transform:scaleX(1.1131);">0</div>
<div class="t" style="left:677.74px;top:644.00px;font-size:15.22px;line-height:15.22px;color:#111;font-weight:normal;z-index:5;transform:scaleX(1.1131);">0</div>
<div class="t" style="left:789.74px;top:644.00px;font-size:15.22px;line-height:15.22px;color:#111;font-weight:normal;z-index:5;transform:scaleX(1.1131);">0</div>
<div class="t" style="left:901.74px;top:644.00px;font-size:15.22px;line-height:15.22px;color:#111;font-weight:normal;z-index:5;transform:scaleX(1.1131);">0</div>
<div class="t" style="left:1013.74px;top:644.00px;font-size:15.22px;line-height:15.22px;color:#111;font-weight:normal;z-index:5;transform:scaleX(1.1131);">0</div>
<div class="t" style="left:1125.74px;top:644.00px;font-size:15.22px;line-height:15.22px;color:#111;font-weight:normal;z-index:5;transform:scaleX(1.1131);">0</div>
<div class="t" style="left:1237.74px;top:644.00px;font-size:15.22px;line-height:15.22px;color:#111;font-weight:normal;z-index:5;transform:scaleX(1.1131);">0</div>
<div class="t" style="left:1349.74px;top:644.00px;font-size:15.22px;line-height:15.22px;color:#111;font-weight:normal;z-index:5;transform:scaleX(1.1131);">0</div>
<div class="t" style="left:1460.93px;top:644.00px;font-size:15.22px;line-height:15.22px;color:#111;font-weight:normal;z-index:5;transform:scaleX(1.2396);">1</div>
<div class="t" style="left:1573.74px;top:644.00px;font-size:15.22px;line-height:15.22px;color:#111;font-weight:normal;z-index:5;transform:scaleX(1.1131);">0</div>
<div class="t" style="left:1691.16px;top:549.00px;font-size:15.22px;line-height:15.22px;color:#fff;font-weight:normal;z-index:5;transform:scaleX(1.1363);">5</div>
<div class="t" style="left:1690.95px;top:597.00px;font-size:15.22px;line-height:15.22px;color:#fff;font-weight:normal;z-index:5;transform:scaleX(1.1857);">2</div>
<div class="t" style="left:1690.53px;top:644.00px;font-size:15.22px;line-height:15.22px;color:#fff;font-weight:normal;z-index:5;transform:scaleX(1.2396);">1</div>
<div class="t" style="left:1444.59px;top:692.00px;font-size:16.67px;line-height:16.67px;color:#111;font-weight:normal;z-index:5;transform:scaleX(0.9195);">40,0%</div>
<div class="t" style="left:1674.19px;top:692.00px;font-size:16.67px;line-height:16.67px;color:#fff;font-weight:normal;z-index:5;transform:scaleX(0.9217);">40,0%</div>
<div class="t" style="left:165.96px;top:895.00px;font-size:11.88px;line-height:11.88px;color:#404040;font-weight:normal;z-index:5;transform:scaleX(1.2364);">0</div>
<div class="t" style="left:293.32px;top:895.00px;font-size:11.88px;line-height:11.88px;color:#404040;font-weight:normal;z-index:5;transform:scaleX(1.2364);">0</div>
<div class="t" style="left:420.68px;top:895.00px;font-size:11.88px;line-height:11.88px;color:#404040;font-weight:normal;z-index:5;transform:scaleX(1.2364);">0</div>
<div class="t" style="left:548.04px;top:895.00px;font-size:11.88px;line-height:11.88px;color:#404040;font-weight:normal;z-index:5;transform:scaleX(1.2364);">0</div>
<div class="t" style="left:675.40px;top:895.00px;font-size:11.88px;line-height:11.88px;color:#404040;font-weight:normal;z-index:5;transform:scaleX(1.2364);">0</div>
<div class="t" style="left:802.76px;top:895.00px;font-size:11.88px;line-height:11.88px;color:#404040;font-weight:normal;z-index:5;transform:scaleX(1.2364);">0</div>
<div class="t" style="left:930.12px;top:895.00px;font-size:11.88px;line-height:11.88px;color:#404040;font-weight:normal;z-index:5;transform:scaleX(1.2364);">0</div>
<div class="t" style="left:1057.48px;top:895.00px;font-size:11.88px;line-height:11.88px;color:#404040;font-weight:normal;z-index:5;transform:scaleX(1.2364);">0</div>
<div class="t" style="left:1184.84px;top:895.00px;font-size:11.88px;line-height:11.88px;color:#404040;font-weight:normal;z-index:5;transform:scaleX(1.2364);">0</div>
<div class="t" style="left:1312.20px;top:895.00px;font-size:11.88px;line-height:11.88px;color:#404040;font-weight:normal;z-index:5;transform:scaleX(1.2364);">0</div>
<div class="t" style="left:1439.34px;top:761.00px;font-size:12.17px;line-height:12.17px;color:#404040;font-weight:normal;z-index:5;transform:scaleX(1.2500);">2</div>
<div class="t" style="left:1439.65px;top:828.00px;font-size:12.75px;line-height:12.75px;color:#404040;font-weight:normal;z-index:5;transform:scaleX(1.0692);">1</div>
<div class="t" style="left:1566.92px;top:895.00px;font-size:11.88px;line-height:11.88px;color:#404040;font-weight:normal;z-index:5;transform:scaleX(1.2364);">0</div>
<div class="t" style="left:147.07px;top:932.00px;font-size:13.04px;line-height:13.04px;color:#595959;font-weight:normal;z-index:5;transform:scaleX(0.9941);">January</div>
<div class="t" style="left:270.63px;top:932.00px;font-size:13.04px;line-height:13.04px;color:#595959;font-weight:normal;z-index:5;transform:scaleX(1.0284);">February</div>
<div class="t" style="left:405.06px;top:932.00px;font-size:13.04px;line-height:13.04px;color:#595959;font-weight:normal;z-index:5;transform:scaleX(1.0881);">March</div>
<div class="t" style="left:538.20px;top:932.00px;font-size:13.04px;line-height:13.04px;color:#595959;font-weight:normal;z-index:5;transform:scaleX(1.0917);">April</div>
<div class="t" style="left:665.96px;top:932.00px;font-size:13.04px;line-height:13.04px;color:#595959;font-weight:normal;z-index:5;transform:scaleX(1.0933);">May</div>
<div class="t" style="left:786.44px;top:932.00px;font-size:13.04px;line-height:13.04px;color:#595959;font-weight:normal;z-index:5;transform:scaleX(1.2427);">June</div>
<div class="t" style="left:923.27px;top:932.00px;font-size:13.04px;line-height:13.04px;color:#595959;font-weight:normal;z-index:5;transform:scaleX(0.9625);">July</div>
<div class="t" style="left:1041.20px;top:932.00px;font-size:13.04px;line-height:13.04px;color:#595959;font-weight:normal;z-index:5;transform:scaleX(1.0040);">August</div>
<div class="t" style="left:1155.46px;top:932.00px;font-size:13.04px;line-height:13.04px;color:#595959;font-weight:normal;z-index:5;transform:scaleX(1.0347);">September</div>
<div class="t" style="left:1292.05px;top:932.00px;font-size:13.04px;line-height:13.04px;color:#595959;font-weight:normal;z-index:5;transform:scaleX(1.0458);">October</div>
<div class="t" style="left:1411.40px;top:932.00px;font-size:13.04px;line-height:13.04px;color:#595959;font-weight:normal;z-index:5;transform:scaleX(1.0568);">November</div>
<div class="t" style="left:1539.42px;top:932.00px;font-size:13.04px;line-height:13.04px;color:#595959;font-weight:normal;z-index:5;transform:scaleX(1.0347);">December</div>
<div class="t" style="left:1694.30px;top:833.00px;font-size:13.33px;line-height:13.33px;color:#595959;font-weight:normal;z-index:5;transform:scaleX(1.0321);">Done</div>
<div class="t" style="left:1694.43px;top:860.00px;font-size:13.33px;line-height:13.33px;color:#595959;font-weight:normal;z-index:5;transform:scaleX(1.0355);">Undone</div>
<div class="t" style="left:107.46px;top:1242.00px;font-size:18.99px;line-height:18.99px;color:#444;font-weight:normal;z-index:23;transform:scaleX(0.8890);">CAD_Q</div>
<div class="t" style="left:183.79px;top:1242.00px;font-size:18.99px;line-height:18.99px;color:#444;font-weight:normal;z-index:23;transform:scaleX(0.8548);">CAD_S</div>
<div class="t" style="left:255.78px;top:1242.00px;font-size:18.99px;line-height:18.99px;color:#444;font-weight:normal;z-index:23;transform:scaleX(0.8647);">CAD_C</div>
<div class="t" style="left:329.19px;top:1242.00px;font-size:18.99px;line-height:18.99px;color:#444;font-weight:normal;z-index:23;transform:scaleX(0.8483);">CAD_E</div>
<div class="t" style="left:400.92px;top:1242.00px;font-size:18.99px;line-height:18.99px;color:#444;font-weight:normal;z-index:23;transform:scaleX(0.7768);">RES</div>
<div class="t" style="left:450.47px;top:1242.00px;font-size:18.99px;line-height:18.99px;color:#444;font-weight:normal;z-index:23;transform:scaleX(0.8759);">DISP</div>
<div class="t" style="left:507.05px;top:1242.00px;font-size:18.99px;line-height:18.99px;color:#444;font-weight:normal;z-index:23;transform:scaleX(0.9578);">Dia</div>
<div class="t" style="left:593.48px;top:1242.00px;font-size:18.99px;line-height:18.99px;color:#444;font-weight:normal;z-index:23;transform:scaleX(0.8711);">RC2</div>
<div class="t" style="left:644.36px;top:1242.00px;font-size:18.99px;line-height:18.99px;color:#444;font-weight:normal;z-index:23;transform:scaleX(1.0774);">INI</div>
<div class="t" style="left:687.26px;top:1242.00px;font-size:18.99px;line-height:18.99px;color:#444;font-weight:normal;z-index:23;transform:scaleX(0.9502);">DUV</div>
<div class="t" style="left:743.72px;top:1242.00px;font-size:18.99px;line-height:18.99px;color:#444;font-weight:normal;z-index:23;transform:scaleX(0.8927);">SUG</div>
<div class="t" style="left:796.27px;top:1242.00px;font-size:18.99px;line-height:18.99px;color:#444;font-weight:normal;z-index:23;transform:scaleX(0.9389);">LUZ</div>
<div class="t" style="left:553.02px;top:1242.00px;font-size:18.99px;line-height:18.99px;color:#217346;font-weight:bold;z-index:23;transform:scaleX(0.8584);">RC</div>
<div class="t" style="left:2002.16px;top:1283.00px;font-size:16.96px;line-height:16.96px;color:#444;font-weight:normal;z-index:22;transform:scaleX(0.8027);">90%</div>
</body></html>
